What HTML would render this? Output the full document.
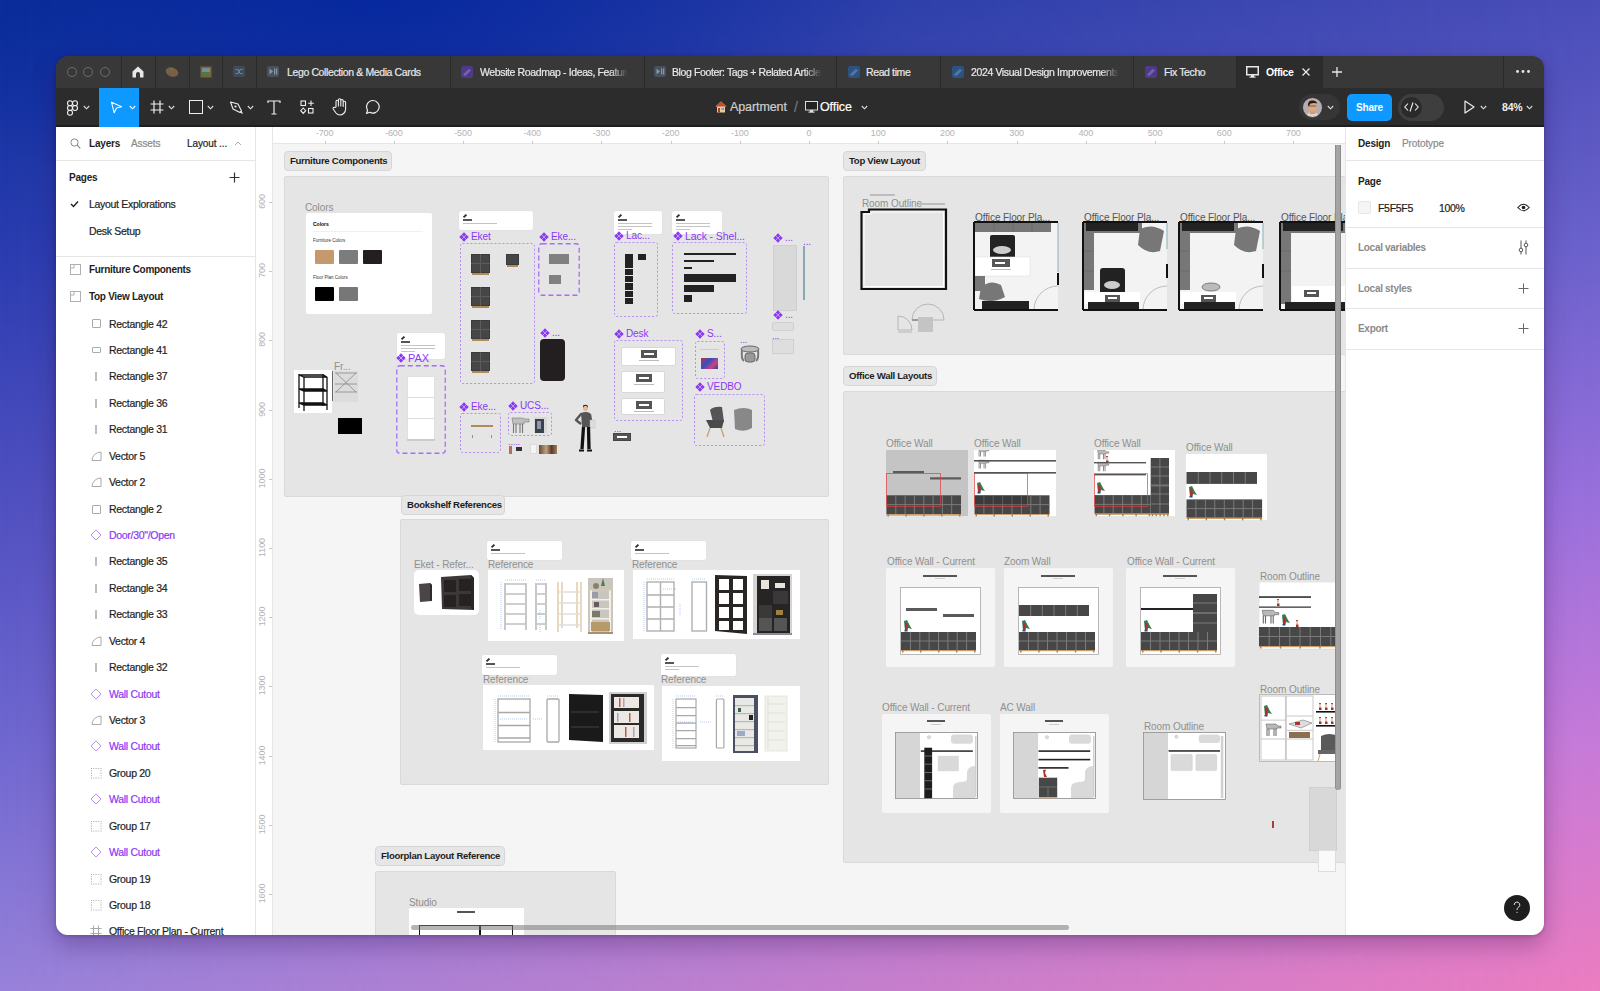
<!DOCTYPE html>
<html><head><meta charset="utf-8">
<style>
*{box-sizing:border-box;margin:0;padding:0}
html,body{width:1600px;height:991px;overflow:hidden;font-family:"Liberation Sans",sans-serif}
body{position:relative;background:#5a50b8}
.a{position:absolute}
#bg1{left:0;top:0;width:1600px;height:991px;background:linear-gradient(to bottom,#0a2e98 0px,#2a3cb0 250px,#5050c0 500px,#7068d0 750px,#9882da 991px)}
#bg2{left:0;top:0;width:1600px;height:991px;background:linear-gradient(to bottom,#4a4eb8 0px,#6c62cc 250px,#9a70dc 500px,#c87ad8 750px,#ec7cc0 991px);-webkit-mask-image:linear-gradient(to right,transparent,#000)}
#shadow{left:56px;top:56px;width:1488px;height:879px;border-radius:12px;box-shadow:0 10px 24px rgba(40,0,60,0.28),0 1px 4px rgba(0,0,0,0.2)}
#win{left:0;top:0;width:1600px;height:991px;clip-path:inset(56px 56px 56px 56px round 12px)}
.t{white-space:nowrap;font-size:10.5px;letter-spacing:-0.3px;line-height:12px;-webkit-text-stroke:0.2px currentColor}
.t[style*="bold"]{-webkit-text-stroke:0}
#tabs{left:56px;top:56px;width:1488px;height:32px;background:#383838}
.sep{width:1px;background:#2a2a2a;top:56px;height:32px}
.tabt{color:#e8e8e8;top:66px;font-size:10.5px;letter-spacing:-0.38px}
#tool{left:56px;top:88px;width:1488px;height:39px;background:#2c2c2c;border-bottom:2px solid #1e1e1e}
#lp{left:56px;top:127px;width:200px;height:808px;background:#fff;border-right:1px solid #e6e6e6}
#rp{left:1345px;top:127px;width:199px;height:808px;background:#fff;border-left:1px solid #e6e6e6}
#cv{left:256px;top:127px;width:1089px;height:808px;background:#f5f5f5;overflow:hidden}
.hr{height:1px;background:#e6e6e6}
.lt{color:#1e1e1e}
.lay{left:109px;color:#1e1e1e}
.pur{color:#8a38f5}
.frame{background:#e5e5e5;border:1px solid #d6d6d6}
.tag{background:#e6e6e6;border:1px solid #d4d4d4;border-radius:3px;font-weight:bold;font-size:10px;letter-spacing:-0.2px;color:#1e1e1e;padding:4px 4px 0 4px;height:20px}
.lbl{color:#8c8c8c;font-size:10px;letter-spacing:-0.2px;white-space:nowrap}
</style></head><body>
<div id="bg1" class="a"></div>
<div id="bg2" class="a"></div>
<div class="a" style="left:0;top:0;width:1600px;height:991px;background:radial-gradient(ellipse 520px 220px at 380px 0px,rgba(0,36,158,0.75),rgba(0,36,158,0) 100%)"></div>
<div id="shadow" class="a"></div>
<div id="win" class="a">
  <!-- TAB BAR -->
  <div id="tabs" class="a"></div>
  <div class="a" style="left:67px;top:67px;width:10px;height:10px;border:1px solid #6e6e6e;border-radius:50%"></div>
  <div class="a" style="left:83px;top:67px;width:10px;height:10px;border:1px solid #6e6e6e;border-radius:50%"></div>
  <div class="a" style="left:100px;top:67px;width:10px;height:10px;border:1px solid #6e6e6e;border-radius:50%"></div>
  <div class="a sep" style="left:121px"></div><div class="a sep" style="left:155px"></div><div class="a sep" style="left:189px"></div><div class="a sep" style="left:222px"></div><div class="a sep" style="left:256px"></div>
  <div class="a sep" style="left:450px"></div><div class="a sep" style="left:644px"></div><div class="a sep" style="left:836px"></div><div class="a sep" style="left:940px"></div><div class="a sep" style="left:1133px"></div><div class="a sep" style="left:1236px"></div><div class="a sep" style="left:1322px"></div><div class="a sep" style="left:1503px"></div>
  <svg class="a" style="left:132px;top:66px" width="12" height="12" viewBox="0 0 12 12"><path d="M6 0.5 L11.5 5.5 V11.5 H8 V8 A2 2 0 0 0 4 8 V11.5 H0.5 V5.5 Z" fill="#e8e8e8"/></svg>
  <svg class="a" style="left:165px;top:66px" width="14" height="12" viewBox="0 0 14 12"><ellipse cx="7" cy="6" rx="6.5" ry="4.5" transform="rotate(20 7 6)" fill="#7a6040"/><circle cx="4" cy="4" r="1.1" fill="#4a6a90"/><circle cx="7" cy="3" r="1.1" fill="#5a8050"/><circle cx="10" cy="5" r="1.1" fill="#905050"/><circle cx="5" cy="8" r="1.1" fill="#705090"/></svg>
  <svg class="a" style="left:200px;top:66px" width="12" height="12" viewBox="0 0 12 12"><rect x="0.5" y="0.5" width="11" height="11" fill="#7a6430"/><rect x="2" y="2" width="8" height="8" fill="#4a7a48"/><rect x="2" y="2" width="8" height="4" fill="#7a8a9a"/></svg>
  <svg class="a" style="left:233px;top:66px" width="12" height="11" viewBox="0 0 12 11"><rect width="12" height="11" rx="2" fill="#3e4c5a"/><path d="M2.5 3.5 H5 L7 7.5 H9.5 M2.5 7.5 H5 L7 3.5 H9.5" stroke="#7a8a9a" stroke-width="0.9" fill="none"/></svg>
  <svg class="a" style="left:267px;top:66px" width="12" height="11" viewBox="0 0 12 11"><rect width="12" height="11" rx="2" fill="#46525e"/><path d="M2.5 2.5 L6 5.5 L2.5 8.5Z" fill="#8a96a2"/><rect x="7" y="2.5" width="1.2" height="6" fill="#8a96a2"/><rect x="9" y="2.5" width="1.2" height="6" fill="#8a96a2"/></svg>
  <div class="a t tabt" style="left:287px">Lego Collection &amp; Media Cards</div>
  <svg class="a" style="left:461px;top:66px" width="12" height="12" viewBox="0 0 12 12"><rect width="12" height="12" rx="2" fill="#4e3a86"/><path d="M3 8.5 L8 3.5 L9 4.5 L4 9.5 Z" fill="none" stroke="#a090d0" stroke-width="0.9"/></svg>
  <div class="a t tabt" style="left:480px;width:148px;overflow:hidden;-webkit-mask-image:linear-gradient(to right,#000 88%,transparent)">Website Roadmap - Ideas, Features</div>
  <svg class="a" style="left:654px;top:66px" width="12" height="11" viewBox="0 0 12 11"><rect width="12" height="11" rx="2" fill="#46525e"/><path d="M2.5 2.5 L6 5.5 L2.5 8.5Z" fill="#8a96a2"/><rect x="7" y="2.5" width="1.2" height="6" fill="#8a96a2"/><rect x="9" y="2.5" width="1.2" height="6" fill="#8a96a2"/></svg>
  <div class="a t tabt" style="left:672px;width:150px;overflow:hidden;-webkit-mask-image:linear-gradient(to right,#000 88%,transparent)">Blog Footer: Tags + Related Articles</div>
  <svg class="a" style="left:848px;top:66px" width="12" height="12" viewBox="0 0 12 12"><rect width="12" height="12" rx="2" fill="#2e5282"/><path d="M3 8.5 L8 3.5 L9 4.5 L4 9.5 Z" fill="none" stroke="#7aa0c8" stroke-width="0.9"/></svg>
  <div class="a t tabt" style="left:866px">Read time</div>
  <svg class="a" style="left:952px;top:66px" width="12" height="12" viewBox="0 0 12 12"><rect width="12" height="12" rx="2" fill="#2e5282"/><path d="M3 8.5 L8 3.5 L9 4.5 L4 9.5 Z" fill="none" stroke="#7aa0c8" stroke-width="0.9"/></svg>
  <div class="a t tabt" style="left:971px;width:148px;overflow:hidden;-webkit-mask-image:linear-gradient(to right,#000 88%,transparent)">2024 Visual Design Improvements</div>
  <svg class="a" style="left:1145px;top:66px" width="12" height="12" viewBox="0 0 12 12"><rect width="12" height="12" rx="2" fill="#4e3a86"/><path d="M3 8.5 L8 3.5 L9 4.5 L4 9.5 Z" fill="none" stroke="#a090d0" stroke-width="0.9"/></svg>
  <div class="a t tabt" style="left:1164px">Fix Techo</div>
  <div class="a" style="left:1237px;top:56px;width:85px;height:32px;background:#2c2c2c"></div>
  <svg class="a" style="left:1246px;top:66px" width="13" height="12" viewBox="0 0 13 12"><rect x="0.75" y="0.75" width="11.5" height="8" fill="none" stroke="#e8e8e8" stroke-width="1.5"/><rect x="5" y="9" width="3" height="2" fill="#e8e8e8"/><rect x="3.5" y="10.5" width="6" height="1.2" fill="#e8e8e8"/></svg>
  <div class="a t tabt" style="left:1266px;color:#fff;font-weight:bold">Office</div>
  <svg class="a" style="left:1301px;top:67px" width="10" height="10" viewBox="0 0 10 10"><path d="M1.5 1.5 L8.5 8.5 M8.5 1.5 L1.5 8.5" stroke="#e8e8e8" stroke-width="1.3"/></svg>
  <svg class="a" style="left:1331px;top:66px" width="12" height="12" viewBox="0 0 12 12"><path d="M6 1 V11 M1 6 H11" stroke="#e8e8e8" stroke-width="1.3"/></svg>
  <svg class="a" style="left:1515px;top:69px" width="16" height="5" viewBox="0 0 16 5"><circle cx="2.5" cy="2.5" r="1.4" fill="#e8e8e8"/><circle cx="8" cy="2.5" r="1.4" fill="#e8e8e8"/><circle cx="13.5" cy="2.5" r="1.4" fill="#e8e8e8"/></svg>

  <!-- TOOLBAR -->
  <div id="tool" class="a"></div>
  <svg class="a" style="left:66px;top:100px" width="13" height="16" viewBox="0 0 13 16"><g fill="none" stroke="#eee" stroke-width="1.1"><circle cx="4" cy="3.2" r="2.5"/><circle cx="9" cy="3.2" r="2.5"/><circle cx="4" cy="8" r="2.5"/><circle cx="9" cy="8" r="2.5"/><circle cx="4" cy="12.8" r="2.5"/></g></svg>
  <svg class="a" style="left:83px;top:105px" width="7" height="5" viewBox="0 0 7 5"><path d="M0.8 1 L3.5 3.8 L6.2 1" fill="none" stroke="#e0e0e0" stroke-width="1.1"/></svg>
  <div class="a" style="left:99px;top:88px;width:40px;height:39px;background:#0d99ff"></div>
  <svg class="a" style="left:110px;top:101px" width="13" height="13" viewBox="0 0 13 13"><path d="M1.5 1.2 L11.5 5.8 L6.5 7 L4.2 11.8 Z" fill="none" stroke="#fff" stroke-width="1.1" stroke-linejoin="round"/></svg>
  <svg class="a" style="left:129px;top:105px" width="7" height="5" viewBox="0 0 7 5"><path d="M0.8 1 L3.5 3.8 L6.2 1" fill="none" stroke="#fff" stroke-width="1.1"/></svg>
  <svg class="a" style="left:150px;top:100px" width="14" height="14" viewBox="0 0 14 14"><path d="M4 0.5 V13.5 M10 0.5 V13.5 M0.5 4 H13.5 M0.5 10 H13.5" stroke="#eee" stroke-width="1.2"/></svg>
  <svg class="a" style="left:168px;top:105px" width="7" height="5" viewBox="0 0 7 5"><path d="M0.8 1 L3.5 3.8 L6.2 1" fill="none" stroke="#e0e0e0" stroke-width="1.1"/></svg>
  <div class="a" style="left:189px;top:100px;width:14px;height:14px;border:1.2px solid #eee"></div>
  <svg class="a" style="left:207px;top:105px" width="7" height="5" viewBox="0 0 7 5"><path d="M0.8 1 L3.5 3.8 L6.2 1" fill="none" stroke="#e0e0e0" stroke-width="1.1"/></svg>
  <svg class="a" style="left:229px;top:100px" width="15" height="15" viewBox="0 0 15 15"><path d="M1.5 2 L9 4 L12.5 11 L11 12.5 L4 9 Z" fill="none" stroke="#eee" stroke-width="1.1" stroke-linejoin="round"/><circle cx="6.5" cy="6.5" r="1.1" fill="#eee"/><path d="M11.5 11.5 L13.5 13.5" stroke="#eee" stroke-width="1.1"/></svg>
  <svg class="a" style="left:247px;top:105px" width="7" height="5" viewBox="0 0 7 5"><path d="M0.8 1 L3.5 3.8 L6.2 1" fill="none" stroke="#e0e0e0" stroke-width="1.1"/></svg>
  <svg class="a" style="left:267px;top:100px" width="14" height="15" viewBox="0 0 14 15"><path d="M1 3 V1 H13 V3 M7 1 V14 M4.5 14 H9.5" fill="none" stroke="#eee" stroke-width="1.2"/></svg>
  <svg class="a" style="left:300px;top:100px" width="15" height="15" viewBox="0 0 15 15"><g fill="none" stroke="#eee" stroke-width="1.1"><rect x="1" y="1" width="4.5" height="4.5"/><path d="M11 0.5 V6 M8.2 3.2 H13.8"/><rect x="8.5" y="8.5" width="4.5" height="4.5"/><path d="M3.2 8 L5.7 10.7 L3.2 13.4 L0.7 10.7 Z"/></g></svg>
  <svg class="a" style="left:332px;top:98px" width="16" height="18" viewBox="0 0 16 18"><path d="M4 9 V3.5 a1.2 1.2 0 0 1 2.4 0 V8 V2 a1.2 1.2 0 0 1 2.4 0 V8 V2.8 a1.2 1.2 0 0 1 2.4 0 V8.5 V4.5 a1.2 1.2 0 0 1 2.4 0 V11 a6 6 0 0 1 -6 6 H8 a5 5 0 0 1 -4 -2 L1.2 11 a1.2 1.2 0 0 1 1.8 -1.5 Z" fill="none" stroke="#eee" stroke-width="1.1" stroke-linejoin="round"/></svg>
  <svg class="a" style="left:365px;top:99px" width="16" height="16" viewBox="0 0 16 16"><path d="M8 1.5 a6.3 6.3 0 1 1 -3.2 11.8 L1.5 14.5 L2.6 11.2 A6.3 6.3 0 0 1 8 1.5 Z" fill="none" stroke="#eee" stroke-width="1.2" stroke-linejoin="round"/></svg>
  <svg class="a" style="left:715px;top:101px" width="12" height="12" viewBox="0 0 12 12"><path d="M6 0.5 L11.5 5.5 H10 V11.5 H2 V5.5 H0.5 Z" fill="#e8c9a0"/><path d="M6 0.5 L11.5 5.5 H0.5 Z" fill="#c0502a"/><rect x="3" y="7" width="2" height="4.5" fill="#a04020"/><rect x="6.5" y="7" width="2.5" height="2" fill="#5aa0d0"/></svg>
  <div class="a t" style="left:730px;top:100px;color:#cfcfcf;font-size:12.5px;line-height:14px;letter-spacing:-0.1px">Apartment</div>
  <div class="a t" style="left:794px;top:99px;color:#777;font-size:14px;line-height:16px">/</div>
  <svg class="a" style="left:805px;top:101px" width="13" height="12" viewBox="0 0 13 12"><rect x="0.5" y="0.5" width="12" height="8.5" fill="#222" stroke="#ddd" stroke-width="1"/><rect x="5" y="9" width="3" height="2" fill="#ddd"/><rect x="3.5" y="10.5" width="6" height="1.2" fill="#ddd"/></svg>
  <div class="a t" style="left:820px;top:100px;color:#fff;font-size:12.5px;line-height:14px;letter-spacing:-0.1px">Office</div>
  <svg class="a" style="left:861px;top:105px" width="7" height="5" viewBox="0 0 7 5"><path d="M0.8 1 L3.5 3.8 L6.2 1" fill="none" stroke="#e0e0e0" stroke-width="1.1"/></svg>
  <div class="a" style="left:1299px;top:94px;width:41px;height:26px;background:#363636;border-radius:13px"></div>
  <svg class="a" style="left:1302px;top:97px" width="21" height="21" viewBox="0 0 21 21"><defs><clipPath id="av"><circle cx="10.5" cy="10.5" r="10"/></clipPath></defs><g clip-path="url(#av)"><rect width="21" height="21" fill="#b5adb0"/><path d="M3 21 Q5 15 10 15 Q16 15 18 21 Z" fill="#d8d4d4"/><rect x="8" y="12" width="5" height="5" fill="#d49a70"/><ellipse cx="10.5" cy="9.5" rx="4.3" ry="5.2" fill="#e0a880"/><path d="M6 8 Q6 3.5 10.5 3.6 Q14.5 3.6 15 6.5 Q12 5.5 8 6.8 L7 10 Z" fill="#2a1a14"/><path d="M7.2 9 H14.2" stroke="#555" stroke-width="0.9"/></g><circle cx="10.5" cy="10.5" r="10" fill="none" stroke="#2a2a2a" stroke-width="0.8"/></svg>
  <svg class="a" style="left:1327px;top:105px" width="7" height="5" viewBox="0 0 7 5"><path d="M0.8 1 L3.5 3.8 L6.2 1" fill="none" stroke="#e0e0e0" stroke-width="1.1"/></svg>
  <div class="a" style="left:1347px;top:94px;width:45px;height:27px;background:#0d99ff;border-radius:5px;color:#fff;font-weight:bold;font-size:10px;line-height:27px;text-align:center;letter-spacing:-0.2px">Share</div>
  <div class="a" style="left:1398px;top:94px;width:46px;height:27px;background:#3e3e3e;border-radius:14px"></div>
  <div class="a" style="left:1401px;top:97px;width:21px;height:21px;background:#2a2a2a;border-radius:50%"></div>
  <svg class="a" style="left:1404px;top:102px" width="15" height="10" viewBox="0 0 15 10"><path d="M4 1.5 L0.8 5 L4 8.5 M11 1.5 L14.2 5 L11 8.5 M9 0.5 L6 9.5" fill="none" stroke="#eee" stroke-width="1.1"/></svg>
  <svg class="a" style="left:1464px;top:100px" width="11" height="14" viewBox="0 0 11 14"><path d="M1 1 L10 7 L1 13 Z" fill="none" stroke="#eee" stroke-width="1.2" stroke-linejoin="round"/></svg>
  <svg class="a" style="left:1480px;top:105px" width="7" height="5" viewBox="0 0 7 5"><path d="M0.8 1 L3.5 3.8 L6.2 1" fill="none" stroke="#e0e0e0" stroke-width="1.1"/></svg>
  <div class="a t" style="left:1502px;top:101px;color:#eee;font-size:10.5px;font-weight:bold;letter-spacing:-0.2px">84%</div>
  <svg class="a" style="left:1526px;top:105px" width="7" height="5" viewBox="0 0 7 5"><path d="M0.8 1 L3.5 3.8 L6.2 1" fill="none" stroke="#e0e0e0" stroke-width="1.1"/></svg>

  <!-- LEFT PANEL -->
  <div id="lp" class="a"></div>
  <svg class="a" style="left:70px;top:138px" width="11" height="11" viewBox="0 0 11 11"><circle cx="4.5" cy="4.5" r="3.6" fill="none" stroke="#8a8a8a" stroke-width="1"/><path d="M7.2 7.2 L10.3 10.3" stroke="#8a8a8a" stroke-width="1.1"/></svg>
  <div class="a t" style="left:89px;top:138px;color:#1e1e1e;font-weight:bold;font-size:10px;letter-spacing:-0.2px">Layers</div>
  <div class="a t" style="left:131px;top:138px;color:#8a8a8a;font-size:10px;letter-spacing:-0.1px">Assets</div>
  <div class="a t" style="left:187px;top:138px;color:#1e1e1e;font-size:10px;letter-spacing:-0.1px">Layout ...</div>
  <svg class="a" style="left:234px;top:141px" width="8" height="5" viewBox="0 0 8 5"><path d="M1 4 L4 1 L7 4" fill="none" stroke="#aaaaaa" stroke-width="1"/></svg>
  <div class="a hr" style="left:56px;top:160px;width:199px"></div>
  <div class="a t" style="left:69px;top:172px;color:#1e1e1e;font-weight:bold;font-size:10px;letter-spacing:-0.2px">Pages</div>
  <svg class="a" style="left:229px;top:172px" width="11" height="11" viewBox="0 0 11 11"><path d="M5.5 0.5 V10.5 M0.5 5.5 H10.5" stroke="#333" stroke-width="1.2"/></svg>
  <svg class="a" style="left:70px;top:200px" width="9" height="8" viewBox="0 0 9 8"><path d="M1 4 L3.5 6.5 L8 1.5" fill="none" stroke="#1e1e1e" stroke-width="1.4"/></svg>
  <div class="a t" style="left:89px;top:198px;color:#1e1e1e">Layout Explorations</div>
  <div class="a t" style="left:89px;top:225px;color:#1e1e1e">Desk Setup</div>
  <div class="a hr" style="left:56px;top:256px;width:199px"></div>
  <svg class="a" style="left:70px;top:264px" width="11" height="11" viewBox="0 0 11 11"><rect x="0.5" y="0.5" width="10" height="10" fill="none" stroke="#b0b0b0"/><path d="M0.5 4 H4 V0.5" fill="none" stroke="#b0b0b0"/></svg>
  <div class="a t" style="left:89px;top:264px;color:#1e1e1e;font-weight:bold;font-size:10px;letter-spacing:-0.3px">Furniture Components</div>
  <svg class="a" style="left:70px;top:291px" width="11" height="11" viewBox="0 0 11 11"><rect x="0.5" y="0.5" width="10" height="10" fill="none" stroke="#b0b0b0"/><path d="M0.5 4 H4 V0.5" fill="none" stroke="#b0b0b0"/></svg>
  <div class="a t" style="left:89px;top:291px;color:#1e1e1e;font-weight:bold;font-size:10px;letter-spacing:-0.3px">Top View Layout</div>
<div class="a" style="left:92px;top:319px;width:9px;height:9px;border:1px solid #aaaaaa;border-radius:1px"></div><div class="a t" style="left:109px;top:318px;color:#1e1e1e">Rectangle 42</div>
<div class="a" style="left:92px;top:347px;width:9px;height:6px;border:1px solid #aaaaaa;border-radius:1px"></div><div class="a t" style="left:109px;top:344px;color:#1e1e1e">Rectangle 41</div>
<div class="a" style="left:95px;top:372px;width:2px;height:9px;background:#bdbdbd"></div><div class="a t" style="left:109px;top:370px;color:#1e1e1e">Rectangle 37</div>
<div class="a" style="left:95px;top:399px;width:2px;height:9px;background:#bdbdbd"></div><div class="a t" style="left:109px;top:397px;color:#1e1e1e">Rectangle 36</div>
<div class="a" style="left:95px;top:425px;width:2px;height:9px;background:#bdbdbd"></div><div class="a t" style="left:109px;top:423px;color:#1e1e1e">Rectangle 31</div>
<svg class="a" style="left:91px;top:451px" width="11" height="10" viewBox="0 0 11 10"><path d="M1 9.5 H10 V1 A9 8.5 0 0 0 1 9.5 Z" fill="none" stroke="#aaaaaa" stroke-width="1"/></svg><div class="a t" style="left:109px;top:450px;color:#1e1e1e">Vector 5</div>
<svg class="a" style="left:91px;top:477px" width="11" height="10" viewBox="0 0 11 10"><path d="M1 9.5 H10 V1 A9 8.5 0 0 0 1 9.5 Z" fill="none" stroke="#aaaaaa" stroke-width="1"/></svg><div class="a t" style="left:109px;top:476px;color:#1e1e1e">Vector 2</div>
<div class="a" style="left:92px;top:505px;width:9px;height:9px;border:1px solid #aaaaaa;border-radius:1px"></div><div class="a t" style="left:109px;top:503px;color:#1e1e1e">Rectangle 2</div>
<svg class="a" style="left:90px;top:529px" width="12" height="12" viewBox="0 0 12 12"><path d="M6 1 L11 6 L6 11 L1 6 Z" fill="none" stroke="#b890f5" stroke-width="1"/></svg><div class="a t" style="left:109px;top:529px;color:#8a38f5">Door/30"/Open</div>
<div class="a" style="left:95px;top:557px;width:2px;height:9px;background:#bdbdbd"></div><div class="a t" style="left:109px;top:555px;color:#1e1e1e">Rectangle 35</div>
<div class="a" style="left:95px;top:584px;width:2px;height:9px;background:#bdbdbd"></div><div class="a t" style="left:109px;top:582px;color:#1e1e1e">Rectangle 34</div>
<div class="a" style="left:95px;top:610px;width:2px;height:9px;background:#bdbdbd"></div><div class="a t" style="left:109px;top:608px;color:#1e1e1e">Rectangle 33</div>
<svg class="a" style="left:91px;top:636px" width="11" height="10" viewBox="0 0 11 10"><path d="M1 9.5 H10 V1 A9 8.5 0 0 0 1 9.5 Z" fill="none" stroke="#aaaaaa" stroke-width="1"/></svg><div class="a t" style="left:109px;top:635px;color:#1e1e1e">Vector 4</div>
<div class="a" style="left:95px;top:663px;width:2px;height:9px;background:#bdbdbd"></div><div class="a t" style="left:109px;top:661px;color:#1e1e1e">Rectangle 32</div>
<svg class="a" style="left:90px;top:688px" width="12" height="12" viewBox="0 0 12 12"><path d="M6 1 L11 6 L6 11 L1 6 Z" fill="none" stroke="#b890f5" stroke-width="1"/></svg><div class="a t" style="left:109px;top:688px;color:#8a38f5">Wall Cutout</div>
<svg class="a" style="left:91px;top:715px" width="11" height="10" viewBox="0 0 11 10"><path d="M1 9.5 H10 V1 A9 8.5 0 0 0 1 9.5 Z" fill="none" stroke="#aaaaaa" stroke-width="1"/></svg><div class="a t" style="left:109px;top:714px;color:#1e1e1e">Vector 3</div>
<svg class="a" style="left:90px;top:740px" width="12" height="12" viewBox="0 0 12 12"><path d="M6 1 L11 6 L6 11 L1 6 Z" fill="none" stroke="#b890f5" stroke-width="1"/></svg><div class="a t" style="left:109px;top:740px;color:#8a38f5">Wall Cutout</div>
<svg class="a" style="left:91px;top:768px" width="11" height="11" viewBox="0 0 11 11"><g fill="#a8a8a8"><rect x="0" y="0" width="1" height="1"/><rect x="4.5" y="0" width="1.2" height="1"/><rect x="9.5" y="0" width="1" height="1"/><rect x="0" y="4.5" width="1" height="1.2"/><rect x="9.5" y="4.5" width="1" height="1.2"/><rect x="0" y="9.5" width="1" height="1"/><rect x="4.5" y="9.5" width="1.2" height="1"/><rect x="9.5" y="9.5" width="1" height="1"/><rect x="2.2" y="0" width="1" height="1"/><rect x="7.2" y="0" width="1" height="1"/><rect x="2.2" y="9.5" width="1" height="1"/><rect x="7.2" y="9.5" width="1" height="1"/><rect x="0" y="2.2" width="1" height="1"/><rect x="0" y="7.2" width="1" height="1"/><rect x="9.5" y="2.2" width="1" height="1"/><rect x="9.5" y="7.2" width="1" height="1"/></g></svg><div class="a t" style="left:109px;top:767px;color:#1e1e1e">Group 20</div>
<svg class="a" style="left:90px;top:793px" width="12" height="12" viewBox="0 0 12 12"><path d="M6 1 L11 6 L6 11 L1 6 Z" fill="none" stroke="#b890f5" stroke-width="1"/></svg><div class="a t" style="left:109px;top:793px;color:#8a38f5">Wall Cutout</div>
<svg class="a" style="left:91px;top:821px" width="11" height="11" viewBox="0 0 11 11"><g fill="#a8a8a8"><rect x="0" y="0" width="1" height="1"/><rect x="4.5" y="0" width="1.2" height="1"/><rect x="9.5" y="0" width="1" height="1"/><rect x="0" y="4.5" width="1" height="1.2"/><rect x="9.5" y="4.5" width="1" height="1.2"/><rect x="0" y="9.5" width="1" height="1"/><rect x="4.5" y="9.5" width="1.2" height="1"/><rect x="9.5" y="9.5" width="1" height="1"/><rect x="2.2" y="0" width="1" height="1"/><rect x="7.2" y="0" width="1" height="1"/><rect x="2.2" y="9.5" width="1" height="1"/><rect x="7.2" y="9.5" width="1" height="1"/><rect x="0" y="2.2" width="1" height="1"/><rect x="0" y="7.2" width="1" height="1"/><rect x="9.5" y="2.2" width="1" height="1"/><rect x="9.5" y="7.2" width="1" height="1"/></g></svg><div class="a t" style="left:109px;top:820px;color:#1e1e1e">Group 17</div>
<svg class="a" style="left:90px;top:846px" width="12" height="12" viewBox="0 0 12 12"><path d="M6 1 L11 6 L6 11 L1 6 Z" fill="none" stroke="#b890f5" stroke-width="1"/></svg><div class="a t" style="left:109px;top:846px;color:#8a38f5">Wall Cutout</div>
<svg class="a" style="left:91px;top:874px" width="11" height="11" viewBox="0 0 11 11"><g fill="#a8a8a8"><rect x="0" y="0" width="1" height="1"/><rect x="4.5" y="0" width="1.2" height="1"/><rect x="9.5" y="0" width="1" height="1"/><rect x="0" y="4.5" width="1" height="1.2"/><rect x="9.5" y="4.5" width="1" height="1.2"/><rect x="0" y="9.5" width="1" height="1"/><rect x="4.5" y="9.5" width="1.2" height="1"/><rect x="9.5" y="9.5" width="1" height="1"/><rect x="2.2" y="0" width="1" height="1"/><rect x="7.2" y="0" width="1" height="1"/><rect x="2.2" y="9.5" width="1" height="1"/><rect x="7.2" y="9.5" width="1" height="1"/><rect x="0" y="2.2" width="1" height="1"/><rect x="0" y="7.2" width="1" height="1"/><rect x="9.5" y="2.2" width="1" height="1"/><rect x="9.5" y="7.2" width="1" height="1"/></g></svg><div class="a t" style="left:109px;top:873px;color:#1e1e1e">Group 19</div>
<svg class="a" style="left:91px;top:900px" width="11" height="11" viewBox="0 0 11 11"><g fill="#a8a8a8"><rect x="0" y="0" width="1" height="1"/><rect x="4.5" y="0" width="1.2" height="1"/><rect x="9.5" y="0" width="1" height="1"/><rect x="0" y="4.5" width="1" height="1.2"/><rect x="9.5" y="4.5" width="1" height="1.2"/><rect x="0" y="9.5" width="1" height="1"/><rect x="4.5" y="9.5" width="1.2" height="1"/><rect x="9.5" y="9.5" width="1" height="1"/><rect x="2.2" y="0" width="1" height="1"/><rect x="7.2" y="0" width="1" height="1"/><rect x="2.2" y="9.5" width="1" height="1"/><rect x="7.2" y="9.5" width="1" height="1"/><rect x="0" y="2.2" width="1" height="1"/><rect x="0" y="7.2" width="1" height="1"/><rect x="9.5" y="2.2" width="1" height="1"/><rect x="9.5" y="7.2" width="1" height="1"/></g></svg><div class="a t" style="left:109px;top:899px;color:#1e1e1e">Group 18</div>
<svg class="a" style="left:90px;top:925px" width="12" height="12" viewBox="0 0 12 12"><path d="M3.5 0.5 V11.5 M8.5 0.5 V11.5 M0.5 3.5 H11.5 M0.5 8.5 H11.5" stroke="#a8a8a8" stroke-width="1"/></svg><div class="a t" style="left:109px;top:925px;color:#1e1e1e">Office Floor Plan - Current</div>

  <!-- CANVAS -->
  <div id="cv" class="a"></div>
<!--CANVAS-->
<!--CONTENT-->
<div class="a" style="left:284px;top:151px;width:108px;height:20px;background:#e6e6e6;border:1px solid #d6d6d6;border-radius:4px;font-weight:bold;font-size:9.6px;line-height:18px;letter-spacing:-0.3px;color:#1e1e1e;padding-left:5px;white-space:nowrap">Furniture Components</div>
<div class="a" style="left:284px;top:176px;width:545px;height:321px;background:#e5e5e5;border:1px solid #d9d9d9;border-radius:2px"></div>
<div class="a" style="left:305px;top:202px;font-size:10px;line-height:12px;color:#8f8f8f;letter-spacing:-0.1px;white-space:nowrap">Colors</div>
<div class="a" style="left:306px;top:213px;width:126px;height:101px;background:#fff;border-radius:2px">
<div class="a" style="left:7px;top:8px;font-size:5px;font-weight:bold;color:#000">Colors</div>
<div class="a" style="left:7px;top:18px;width:110px;height:1px;background:#f0f0f0"></div>
<div class="a" style="left:7px;top:25px;font-size:4.5px;color:#333;white-space:nowrap">Furniture Colors</div>
<div class="a" style="left:9px;top:37px;width:19px;height:14px;background:#c49a6c;border-radius:1px"></div>
<div class="a" style="left:33px;top:37px;width:19px;height:14px;background:#7b7c7e;border-radius:1px"></div>
<div class="a" style="left:57px;top:37px;width:19px;height:14px;background:#231f20;border-radius:1px"></div>
<div class="a" style="left:7px;top:62px;font-size:4.5px;color:#333;white-space:nowrap">Floor Plan Colors</div>
<div class="a" style="left:9px;top:74px;width:19px;height:14px;background:#000;border-radius:1px"></div>
<div class="a" style="left:33px;top:74px;width:19px;height:14px;background:#777;border-radius:1px"></div>
</div>
<div class="a" style="left:459px;top:211px;width:74px;height:19px;background:#fff;border-radius:2px;box-shadow:0 0 1px rgba(0,0,0,0.12)"><div class="a" style="left:4px;top:4px;width:4px;height:2px;background:#333;transform:rotate(-45deg)"></div><div class="a" style="left:4px;top:8px;width:9px;height:2px;background:#555"></div><div class="a" style="left:4px;top:12px;width:34px;height:1px;background:#c4c4c4"></div></div>
<svg class="a" style="left:459px;top:232px" width="10" height="10" viewBox="0 0 10 10"><g fill="#8a38f5"><path d="M5 0.3 L7.2 2.5 L5 4.7 L2.8 2.5Z"/><path d="M5 5.3 L7.2 7.5 L5 9.7 L2.8 7.5Z"/><path d="M2.5 2.8 L4.7 5 L2.5 7.2 L0.3 5Z"/><path d="M7.5 2.8 L9.7 5 L7.5 7.2 L5.3 5Z"/></g></svg>
<div class="a" style="left:471px;top:231px;font-size:10px;line-height:12px;color:#8a38f5;letter-spacing:-0.1px;white-space:nowrap">Eket</div>
<svg class="a" style="left:460px;top:243px" width="75" height="141"><rect x="0.5" y="0.5" width="74" height="140" rx="2" fill="none" stroke="#b58cf5" stroke-width="1" stroke-dasharray="2 2"/></svg>
<div class="a" style="left:471px;top:254px;width:19px;height:19px;background:#464646;border:1px solid #3a3a3a"></div><div class="a" style="left:480px;top:254px;width:1px;height:19px;background:#5c5c5c"></div><div class="a" style="left:471px;top:263px;width:19px;height:1px;background:#5c5c5c"></div><div class="a" style="left:472px;top:273px;width:17px;height:2px;background:#b08a58"></div>
<div class="a" style="left:506px;top:254px;width:13px;height:11px;background:#464646;border:1px solid #3a3a3a"></div><div class="a" style="left:507px;top:265px;width:11px;height:2px;background:#b08a58"></div>
<div class="a" style="left:471px;top:287px;width:19px;height:19px;background:#464646;border:1px solid #3a3a3a"></div><div class="a" style="left:480px;top:287px;width:1px;height:19px;background:#5c5c5c"></div><div class="a" style="left:471px;top:296px;width:19px;height:1px;background:#5c5c5c"></div><div class="a" style="left:472px;top:306px;width:17px;height:2px;background:#b08a58"></div>
<div class="a" style="left:471px;top:320px;width:19px;height:19px;background:#464646;border:1px solid #3a3a3a"></div><div class="a" style="left:480px;top:320px;width:1px;height:19px;background:#5c5c5c"></div><div class="a" style="left:471px;top:329px;width:19px;height:1px;background:#5c5c5c"></div><div class="a" style="left:472px;top:339px;width:17px;height:2px;background:#b08a58"></div>
<div class="a" style="left:471px;top:352px;width:19px;height:19px;background:#464646;border:1px solid #3a3a3a"></div><div class="a" style="left:480px;top:352px;width:1px;height:19px;background:#5c5c5c"></div><div class="a" style="left:471px;top:361px;width:19px;height:1px;background:#5c5c5c"></div><div class="a" style="left:472px;top:371px;width:17px;height:2px;background:#b08a58"></div>
<svg class="a" style="left:539px;top:232px" width="10" height="10" viewBox="0 0 10 10"><g fill="#8a38f5"><path d="M5 0.3 L7.2 2.5 L5 4.7 L2.8 2.5Z"/><path d="M5 5.3 L7.2 7.5 L5 9.7 L2.8 7.5Z"/><path d="M2.5 2.8 L4.7 5 L2.5 7.2 L0.3 5Z"/><path d="M7.5 2.8 L9.7 5 L7.5 7.2 L5.3 5Z"/></g></svg>
<div class="a" style="left:551px;top:231px;font-size:10px;line-height:12px;color:#8a38f5;letter-spacing:-0.1px;white-space:nowrap">Eke...</div>
<svg class="a" style="left:538px;top:243px" width="42" height="53"><rect x="0.75" y="0.75" width="40.5" height="51.5" rx="3" fill="none" stroke="#a66ef6" stroke-width="1.3" stroke-dasharray="5 3"/></svg>
<div class="a" style="left:549px;top:254px;width:20px;height:10px;background:#808080"></div>
<div class="a" style="left:549px;top:275px;width:12px;height:9px;background:#808080"></div>
<div class="a" style="left:614px;top:211px;width:48px;height:23px;background:#fff;border-radius:2px;box-shadow:0 0 1px rgba(0,0,0,0.12)"><div class="a" style="left:4px;top:4px;width:4px;height:2px;background:#333;transform:rotate(-45deg)"></div><div class="a" style="left:4px;top:8px;width:9px;height:2px;background:#555"></div><div class="a" style="left:4px;top:12px;width:34px;height:1px;background:#c4c4c4"></div><div class="a" style="left:4px;top:15px;width:34px;height:1px;background:#c4c4c4"></div><div class="a" style="left:4px;top:18px;width:14px;height:1px;background:#c4c4c4"></div></div>
<svg class="a" style="left:614px;top:231px" width="10" height="10" viewBox="0 0 10 10"><g fill="#8a38f5"><path d="M5 0.3 L7.2 2.5 L5 4.7 L2.8 2.5Z"/><path d="M5 5.3 L7.2 7.5 L5 9.7 L2.8 7.5Z"/><path d="M2.5 2.8 L4.7 5 L2.5 7.2 L0.3 5Z"/><path d="M7.5 2.8 L9.7 5 L7.5 7.2 L5.3 5Z"/></g></svg>
<div class="a" style="left:626px;top:230px;font-size:10px;line-height:12px;color:#8a38f5;letter-spacing:-0.1px;white-space:nowrap">Lac...</div>
<svg class="a" style="left:614px;top:242px" width="44" height="75"><rect x="0.5" y="0.5" width="43" height="74" rx="2" fill="none" stroke="#b58cf5" stroke-width="1" stroke-dasharray="2 2"/></svg>
<div class="a" style="left:625px;top:254.0px;width:8px;height:6.5px;background:#222"></div>
<div class="a" style="left:625px;top:261.3px;width:8px;height:6.5px;background:#222"></div>
<div class="a" style="left:625px;top:268.6px;width:8px;height:6.5px;background:#222"></div>
<div class="a" style="left:625px;top:275.9px;width:8px;height:6.5px;background:#222"></div>
<div class="a" style="left:625px;top:283.2px;width:8px;height:6.5px;background:#222"></div>
<div class="a" style="left:625px;top:290.5px;width:8px;height:6.5px;background:#222"></div>
<div class="a" style="left:625px;top:297.8px;width:8px;height:6.5px;background:#222"></div>
<div class="a" style="left:638px;top:254px;width:8px;height:6px;background:#222"></div>
<div class="a" style="left:672px;top:211px;width:50px;height:23px;background:#fff;border-radius:2px;box-shadow:0 0 1px rgba(0,0,0,0.12)"><div class="a" style="left:4px;top:4px;width:4px;height:2px;background:#333;transform:rotate(-45deg)"></div><div class="a" style="left:4px;top:8px;width:9px;height:2px;background:#555"></div><div class="a" style="left:4px;top:12px;width:34px;height:1px;background:#c4c4c4"></div><div class="a" style="left:4px;top:15px;width:34px;height:1px;background:#c4c4c4"></div><div class="a" style="left:4px;top:18px;width:14px;height:1px;background:#c4c4c4"></div></div>
<svg class="a" style="left:673px;top:231px" width="10" height="10" viewBox="0 0 10 10"><g fill="#8a38f5"><path d="M5 0.3 L7.2 2.5 L5 4.7 L2.8 2.5Z"/><path d="M5 5.3 L7.2 7.5 L5 9.7 L2.8 7.5Z"/><path d="M2.5 2.8 L4.7 5 L2.5 7.2 L0.3 5Z"/><path d="M7.5 2.8 L9.7 5 L7.5 7.2 L5.3 5Z"/></g></svg>
<div class="a" style="left:685px;top:230px;font-size:10.5px;line-height:12px;color:#8a38f5;letter-spacing:-0.1px;white-space:nowrap">Lack - Shel...</div>
<svg class="a" style="left:672px;top:242px" width="75" height="72"><rect x="0.5" y="0.5" width="74" height="71" rx="2" fill="none" stroke="#b58cf5" stroke-width="1" stroke-dasharray="2 2"/></svg>
<div class="a" style="left:684px;top:253px;width:52px;height:2px;background:#222"></div>
<div class="a" style="left:684px;top:260px;width:30px;height:2px;background:#222"></div>
<div class="a" style="left:684px;top:267px;width:8px;height:2px;background:#222"></div>
<div class="a" style="left:684px;top:274px;width:52px;height:8px;background:#222"></div>
<div class="a" style="left:684px;top:285px;width:30px;height:7px;background:#222"></div>
<div class="a" style="left:684px;top:295px;width:8px;height:7px;background:#222"></div>
<svg class="a" style="left:773px;top:233px" width="10" height="10" viewBox="0 0 10 10"><g fill="#8a38f5"><path d="M5 0.3 L7.2 2.5 L5 4.7 L2.8 2.5Z"/><path d="M5 5.3 L7.2 7.5 L5 9.7 L2.8 7.5Z"/><path d="M2.5 2.8 L4.7 5 L2.5 7.2 L0.3 5Z"/><path d="M7.5 2.8 L9.7 5 L7.5 7.2 L5.3 5Z"/></g></svg>
<div class="a" style="left:785px;top:232px;font-size:10px;line-height:12px;color:#8a38f5;letter-spacing:-0.1px;white-space:nowrap">...</div>
<div class="a" style="left:773px;top:245px;width:24px;height:66px;background:#d9d9d9;border:1px solid #cfcfcf"></div>
<div class="a" style="left:803px;top:246px;width:1.5px;height:54px;background:#8aa8b0"></div>
<div class="a" style="left:803px;top:236px;font-size:10px;line-height:12px;color:#8a38f5;letter-spacing:-0.1px;white-space:nowrap">...</div>
<svg class="a" style="left:773px;top:310px" width="10" height="10" viewBox="0 0 10 10"><g fill="#8a38f5"><path d="M5 0.3 L7.2 2.5 L5 4.7 L2.8 2.5Z"/><path d="M5 5.3 L7.2 7.5 L5 9.7 L2.8 7.5Z"/><path d="M2.5 2.8 L4.7 5 L2.5 7.2 L0.3 5Z"/><path d="M7.5 2.8 L9.7 5 L7.5 7.2 L5.3 5Z"/></g></svg>
<div class="a" style="left:785px;top:309px;font-size:10px;line-height:12px;color:#8a38f5;letter-spacing:-0.1px;white-space:nowrap">...</div>
<div class="a" style="left:772px;top:322px;width:22px;height:9px;background:#dedede;border:1px solid #cfcfcf;border-radius:2px"></div>
<div class="a" style="left:772px;top:330px;font-size:9px;line-height:12px;color:#8a38f5;letter-spacing:-0.1px;white-space:nowrap">...</div>
<div class="a" style="left:772px;top:339px;width:22px;height:15px;background:#dedede;border:1px solid #cfcfcf"></div>
<svg class="a" style="left:540px;top:328px" width="10" height="10" viewBox="0 0 10 10"><g fill="#8a38f5"><path d="M5 0.3 L7.2 2.5 L5 4.7 L2.8 2.5Z"/><path d="M5 5.3 L7.2 7.5 L5 9.7 L2.8 7.5Z"/><path d="M2.5 2.8 L4.7 5 L2.5 7.2 L0.3 5Z"/><path d="M7.5 2.8 L9.7 5 L7.5 7.2 L5.3 5Z"/></g></svg>
<div class="a" style="left:552px;top:327px;font-size:10px;line-height:12px;color:#8a38f5;letter-spacing:-0.1px;white-space:nowrap">...</div>
<div class="a" style="left:540px;top:339px;width:25px;height:42px;background:#231f20;border-radius:4px"></div>
<div class="a" style="left:294px;top:370px;width:38px;height:43px;background:#fff"></div>
<svg class="a" style="left:297px;top:372px" width="32" height="40" viewBox="0 0 32 40"><g stroke="#111" stroke-width="1.3" fill="none"><path d="M2 2 V36 M26 2 V34 M7 5 V39 M30 5 V38"/><path d="M2 3 H26 L30 5 H7 Z"/><path d="M2 17 H26 L30 19 H7 Z"/><path d="M2 31 H26 L30 33 H7 Z"/></g><g fill="#111"><path d="M2 17 H26 L30 19 H7Z"/><path d="M2 31 H26 L30 33 H7Z"/></g></svg>
<div class="a" style="left:334px;top:361px;font-size:10px;line-height:12px;color:#8f8f8f;letter-spacing:-0.1px;white-space:nowrap">Fr...</div>
<svg class="a" style="left:334px;top:371px" width="24" height="31" viewBox="0 0 24 31"><rect x="0" y="0" width="24" height="31" fill="#dcdcdc"/><g stroke="#888" stroke-width="0.8" fill="none"><path d="M1 2 H23 M1 13 H23 M1 21 H23 M2 2 L22 21 M22 2 L2 21"/></g></svg>
<div class="a" style="left:332px;top:371px;width:1px;height:30px;background:#666"></div>
<div class="a" style="left:338px;top:418px;width:24px;height:16px;background:#000"></div>
<div class="a" style="left:397px;top:333px;width:48px;height:26px;background:#fff;border-radius:2px;box-shadow:0 0 1px rgba(0,0,0,0.12)"><div class="a" style="left:4px;top:4px;width:4px;height:2px;background:#333;transform:rotate(-45deg)"></div><div class="a" style="left:4px;top:8px;width:9px;height:2px;background:#555"></div><div class="a" style="left:4px;top:12px;width:34px;height:1px;background:#c4c4c4"></div><div class="a" style="left:4px;top:15px;width:34px;height:1px;background:#c4c4c4"></div><div class="a" style="left:4px;top:18px;width:14px;height:1px;background:#c4c4c4"></div></div>
<svg class="a" style="left:396px;top:353px" width="10" height="10" viewBox="0 0 10 10"><g fill="#8a38f5"><path d="M5 0.3 L7.2 2.5 L5 4.7 L2.8 2.5Z"/><path d="M5 5.3 L7.2 7.5 L5 9.7 L2.8 7.5Z"/><path d="M2.5 2.8 L4.7 5 L2.5 7.2 L0.3 5Z"/><path d="M7.5 2.8 L9.7 5 L7.5 7.2 L5.3 5Z"/></g></svg>
<div class="a" style="left:408px;top:352px;font-size:11px;line-height:12px;color:#8a38f5;letter-spacing:-0.1px;white-space:nowrap">PAX</div>
<svg class="a" style="left:396px;top:365px" width="50" height="89"><rect x="0.75" y="0.75" width="48.5" height="87.5" rx="3" fill="none" stroke="#a66ef6" stroke-width="1.3" stroke-dasharray="5 3"/></svg>
<div class="a" style="left:407px;top:376px;width:28px;height:64px;background:#fff;border:1px solid #e0e0e0"></div>
<div class="a" style="left:407px;top:397px;width:28px;height:1px;background:#ddd"></div>
<div class="a" style="left:407px;top:418px;width:28px;height:1px;background:#ddd"></div>
<div class="a" style="left:407px;top:439px;width:28px;height:2px;background:#ccc"></div>
<svg class="a" style="left:459px;top:402px" width="10" height="10" viewBox="0 0 10 10"><g fill="#8a38f5"><path d="M5 0.3 L7.2 2.5 L5 4.7 L2.8 2.5Z"/><path d="M5 5.3 L7.2 7.5 L5 9.7 L2.8 7.5Z"/><path d="M2.5 2.8 L4.7 5 L2.5 7.2 L0.3 5Z"/><path d="M7.5 2.8 L9.7 5 L7.5 7.2 L5.3 5Z"/></g></svg>
<div class="a" style="left:471px;top:401px;font-size:10px;line-height:12px;color:#8a38f5;letter-spacing:-0.1px;white-space:nowrap">Eke...</div>
<svg class="a" style="left:460px;top:413px" width="41" height="40"><rect x="0.5" y="0.5" width="40" height="39" rx="2" fill="none" stroke="#b58cf5" stroke-width="1" stroke-dasharray="2 2"/></svg>
<div class="a" style="left:471px;top:425px;width:22px;height:2px;background:#b08a58"></div>
<div class="a" style="left:472px;top:435px;width:1px;height:3px;background:#b08a58"></div>
<div class="a" style="left:491px;top:435px;width:1px;height:3px;background:#b08a58"></div>
<svg class="a" style="left:508px;top:401px" width="10" height="10" viewBox="0 0 10 10"><g fill="#8a38f5"><path d="M5 0.3 L7.2 2.5 L5 4.7 L2.8 2.5Z"/><path d="M5 5.3 L7.2 7.5 L5 9.7 L2.8 7.5Z"/><path d="M2.5 2.8 L4.7 5 L2.5 7.2 L0.3 5Z"/><path d="M7.5 2.8 L9.7 5 L7.5 7.2 L5.3 5Z"/></g></svg>
<div class="a" style="left:520px;top:400px;font-size:10px;line-height:12px;color:#8a38f5;letter-spacing:-0.1px;white-space:nowrap">UCS...</div>
<svg class="a" style="left:508px;top:412px" width="44" height="24"><rect x="0.5" y="0.5" width="43" height="23" rx="2" fill="none" stroke="#b58cf5" stroke-width="1" stroke-dasharray="2 2"/></svg>
<svg class="a" style="left:510px;top:415px" width="40" height="20" viewBox="0 0 40 20"><path d="M2 3 H12 L15 4 H19 V7 H14 V9 H3 Z" fill="#c0c0c0" stroke="#666" stroke-width="0.5"/><path d="M3.5 9 V18 M6 9 V18 M10 9 V18 M12.5 9 V18" stroke="#777" stroke-width="1.1"/><rect x="24" y="2" width="13" height="16" fill="#d8d8d8"/><rect x="25" y="4" width="9" height="14" fill="#3a4050"/><rect x="27" y="6" width="4" height="8" fill="#9098a8"/></svg>
<div class="a" style="left:508px;top:436px;font-size:9px;line-height:12px;color:#8a38f5;letter-spacing:-0.1px;white-space:nowrap">.....</div>
<div class="a" style="left:509px;top:446px;width:3px;height:8px;background:#b07060"></div>
<div class="a" style="left:516px;top:447px;width:6px;height:4px;background:#333"></div>
<div class="a" style="left:530px;top:444px;width:7px;height:10px;background:#f4f4f4;border:1px solid #ddd"></div>
<div class="a" style="left:539px;top:445px;width:18px;height:9px;background:linear-gradient(90deg,#6a4a30,#c0a080 40%,#5a3a2a 70%,#a08060)"></div>
<svg class="a" style="left:573px;top:403px" width="26" height="50" viewBox="0 0 26 50"><path d="M10 2.5 Q13 1 15 3 L15 5 L10 5 Z" fill="#222"/><ellipse cx="12.5" cy="5.5" rx="2.4" ry="2.8" fill="#e8b898"/><path d="M8 10 Q12.5 8 17 10 L18 24 L9 24 Z" fill="#555"/><path d="M8.5 10.5 L3 17 L8 21" fill="none" stroke="#555" stroke-width="2.4" stroke-linejoin="round"/><path d="M17 11 L18.5 20" fill="none" stroke="#555" stroke-width="2.2"/><rect x="17" y="17" width="5" height="8" fill="#ddd" stroke="#bbb" stroke-width="0.4"/><path d="M10.5 24 L9 46 M15.5 24 L16 46" stroke="#111" stroke-width="3.3"/><path d="M6 47.5 H11 M14 47.5 H19" stroke="#111" stroke-width="2"/></svg>
<svg class="a" style="left:614px;top:329px" width="10" height="10" viewBox="0 0 10 10"><g fill="#8a38f5"><path d="M5 0.3 L7.2 2.5 L5 4.7 L2.8 2.5Z"/><path d="M5 5.3 L7.2 7.5 L5 9.7 L2.8 7.5Z"/><path d="M2.5 2.8 L4.7 5 L2.5 7.2 L0.3 5Z"/><path d="M7.5 2.8 L9.7 5 L7.5 7.2 L5.3 5Z"/></g></svg>
<div class="a" style="left:626px;top:328px;font-size:10px;line-height:12px;color:#8a38f5;letter-spacing:-0.1px;white-space:nowrap">Desk</div>
<svg class="a" style="left:614px;top:340px" width="69" height="81"><rect x="0.5" y="0.5" width="68" height="80" rx="2" fill="none" stroke="#b58cf5" stroke-width="1" stroke-dasharray="2 2"/></svg>
<div class="a" style="left:621px;top:347px;width:55px;height:19px;background:#fff;border:1px solid #d8d8d8;border-radius:2px"><div class="a" style="left:19px;top:2px;width:16px;height:8px;background:#555"></div><div class="a" style="left:22px;top:5px;width:10px;height:2px;background:#fff"></div><div class="a" style="left:17px;top:12px;width:20px;height:1px;background:#bbb"></div></div>
<div class="a" style="left:621px;top:371px;width:44px;height:22px;background:#fff;border:1px solid #d8d8d8;border-radius:2px"><div class="a" style="left:14px;top:2px;width:16px;height:8px;background:#555"></div><div class="a" style="left:17px;top:5px;width:10px;height:2px;background:#fff"></div><div class="a" style="left:12px;top:12px;width:20px;height:1px;background:#bbb"></div></div>
<div class="a" style="left:621px;top:398px;width:44px;height:17px;background:#fff;border:1px solid #d8d8d8;border-radius:2px"><div class="a" style="left:14px;top:2px;width:16px;height:8px;background:#555"></div><div class="a" style="left:17px;top:5px;width:10px;height:2px;background:#fff"></div><div class="a" style="left:12px;top:12px;width:20px;height:1px;background:#bbb"></div></div>
<div class="a" style="left:614px;top:423px;font-size:9px;line-height:12px;color:#8a38f5;letter-spacing:-0.1px;white-space:nowrap">...</div>
<div class="a" style="left:613px;top:433px;width:18px;height:8px;background:#555;border:1px solid #444"></div>
<div class="a" style="left:617px;top:436px;width:10px;height:2px;background:#fff"></div>
<svg class="a" style="left:695px;top:329px" width="10" height="10" viewBox="0 0 10 10"><g fill="#8a38f5"><path d="M5 0.3 L7.2 2.5 L5 4.7 L2.8 2.5Z"/><path d="M5 5.3 L7.2 7.5 L5 9.7 L2.8 7.5Z"/><path d="M2.5 2.8 L4.7 5 L2.5 7.2 L0.3 5Z"/><path d="M7.5 2.8 L9.7 5 L7.5 7.2 L5.3 5Z"/></g></svg>
<div class="a" style="left:707px;top:328px;font-size:10px;line-height:12px;color:#8a38f5;letter-spacing:-0.1px;white-space:nowrap">S...</div>
<svg class="a" style="left:695px;top:341px" width="30" height="38"><rect x="0.5" y="0.5" width="29" height="37" rx="2" fill="none" stroke="#b58cf5" stroke-width="1" stroke-dasharray="2 2"/></svg>
<div class="a" style="left:701px;top:358px;width:17px;height:11px;background:linear-gradient(135deg,#c03050,#3050c0 40%,#d04080 70%,#3040a0)"></div>
<div class="a" style="left:700px;top:349px;width:19px;height:1px;background:#ccc"></div>
<div class="a" style="left:740px;top:334px;font-size:9px;line-height:12px;color:#8a38f5;letter-spacing:-0.1px;white-space:nowrap">...</div>
<svg class="a" style="left:739px;top:345px" width="22" height="20" viewBox="0 0 22 20"><ellipse cx="11" cy="4" rx="9" ry="3" fill="#bbb" stroke="#666" stroke-width="1"/><path d="M3 5 Q2 14 5 16 M19 5 Q20 14 17 16" stroke="#777" stroke-width="2" fill="none"/><rect x="6" y="8" width="10" height="9" rx="3" fill="#999" stroke="#666"/></svg>
<svg class="a" style="left:695px;top:382px" width="10" height="10" viewBox="0 0 10 10"><g fill="#8a38f5"><path d="M5 0.3 L7.2 2.5 L5 4.7 L2.8 2.5Z"/><path d="M5 5.3 L7.2 7.5 L5 9.7 L2.8 7.5Z"/><path d="M2.5 2.8 L4.7 5 L2.5 7.2 L0.3 5Z"/><path d="M7.5 2.8 L9.7 5 L7.5 7.2 L5.3 5Z"/></g></svg>
<div class="a" style="left:707px;top:381px;font-size:10px;line-height:12px;color:#8a38f5;letter-spacing:-0.1px;white-space:nowrap">VEDBO</div>
<svg class="a" style="left:694px;top:394px" width="71" height="52"><rect x="0.5" y="0.5" width="70" height="51" rx="2" fill="none" stroke="#b58cf5" stroke-width="1" stroke-dasharray="2 2"/></svg>
<svg class="a" style="left:704px;top:404px" width="52" height="34" viewBox="0 0 52 34"><path d="M6 6 Q10 2 18 3 L20 18 L10 22 Z" fill="#555"/><path d="M2 16 L20 16 L18 24 L6 24Z" fill="#4a4a4a"/><path d="M6 24 L3 33 M17 24 L20 33" stroke="#c8a070" stroke-width="1.3"/><path d="M30 6 Q40 2 48 6 L48 24 Q40 29 31 25 Z" fill="#888"/></svg>
<div class="a" style="left:401px;top:495px;width:104px;height:20px;background:#e6e6e6;border:1px solid #d6d6d6;border-radius:4px;font-weight:bold;font-size:9.6px;line-height:18px;letter-spacing:-0.3px;color:#1e1e1e;padding-left:5px;white-space:nowrap">Bookshelf References</div>
<div class="a" style="left:400px;top:519px;width:429px;height:266px;background:#e5e5e5;border:1px solid #d9d9d9;border-radius:2px"></div>
<div class="a" style="left:414px;top:559px;font-size:10px;line-height:12px;color:#8f8f8f;letter-spacing:-0.1px;white-space:nowrap">Eket - Refer...</div>
<div class="a" style="left:414px;top:570px;width:65px;height:45px;background:#fff;border-radius:5px"></div><svg class="a" style="left:414px;top:570px" width="65" height="45" viewBox="0 0 65 45"><path d="M5 14 L16 13 L18 15 L18 31 L6 32 Z" fill="#4a4646"/><path d="M16 13 L18 15 V31 L16 30 Z" fill="#2e2a2a"/><path d="M27 7 L57 5 L60 8 V40 L28 39 Z" fill="#3c3838"/><g fill="#262222"><rect x="30" y="10" width="12" height="12"/><rect x="45" y="9" width="12" height="12"/><rect x="30" y="25" width="12" height="12"/><rect x="45" y="24" width="12" height="12"/></g><path d="M57 5 L60 8 V40 L57 38 Z" fill="#2a2626"/></svg>
<div class="a" style="left:487px;top:541px;width:75px;height:19px;background:#fff;border-radius:2px;box-shadow:0 0 1px rgba(0,0,0,0.12)"><div class="a" style="left:4px;top:4px;width:4px;height:2px;background:#333;transform:rotate(-45deg)"></div><div class="a" style="left:4px;top:8px;width:9px;height:2px;background:#555"></div><div class="a" style="left:4px;top:12px;width:34px;height:1px;background:#c4c4c4"></div></div>
<div class="a" style="left:488px;top:559px;font-size:10px;line-height:12px;color:#8f8f8f;letter-spacing:-0.1px;white-space:nowrap">Reference</div>
<div class="a" style="left:488px;top:570px;width:136px;height:71px;background:#fff"></div>
<svg class="a" style="left:488px;top:570px" width="136" height="71" viewBox="0 0 136 71"><g stroke="#9a9a9a" stroke-width="1.1" fill="none"><path d="M17 13 V60 M38 13 V60 M48 13 V60 M58 13 V60"/><path d="M17 14 H38 M17 24 H38 M17 34 H38 M17 44 H38 M17 54 H38"/><path d="M48 14 H58 M48 24 H58 M48 34 H58 M48 44 H58 M48 54 H58"/></g><g stroke="#cfcfcf" stroke-width="1.5"><path d="M17 14 H38 M17 24 H38 M17 34 H38 M17 44 H38 M17 54 H38 M48 14 H58 M48 24 H58 M48 34 H58 M48 44 H58 M48 54 H58"/></g><g stroke="#4a7ad8" stroke-width="0.5" stroke-dasharray="1 1" opacity="0.8"><path d="M13 12 V60 M17 10 H38 M48 10 H58 M52 40 V50 M52 55 V62"/></g><g stroke="#e0c8a0" stroke-width="1.4" fill="none"><path d="M70 12 V62 M93 12 V62 M74 12 V58 M89 12 V58"/></g><g stroke="#dedede" stroke-width="1.3"><path d="M70 22 H93 M70 33 H93 M70 44 H93 M70 55 H93"/></g><rect x="100" y="8" width="25" height="56" fill="#c9c6c0"/><g fill="#f4f0e8"><rect x="102" y="20" width="2" height="42"/><rect x="121" y="20" width="2" height="42"/><rect x="102" y="29" width="21" height="1.5"/><rect x="102" y="38" width="21" height="1.5"/><rect x="102" y="48" width="21" height="1.5"/></g><g fill="#d8c8a8"><rect x="102" y="19" width="21" height="1.5"/></g><circle cx="108" cy="16" r="3" fill="#8a8070"/><path d="M115 8 L117 16 L113 16 Z" fill="#5a7a40"/><rect x="104" y="22" width="6" height="6" fill="#9a9aa8"/><rect x="106" y="32" width="5" height="5" fill="#6a5a5a"/><rect x="104" y="41" width="8" height="6" fill="#7a7a6a"/><rect x="103" y="52" width="19" height="9" fill="#b89a6a"/><rect x="100" y="62" width="25" height="2" fill="#a89070"/></svg>
<div class="a" style="left:631px;top:541px;width:75px;height:19px;background:#fff;border-radius:2px;box-shadow:0 0 1px rgba(0,0,0,0.12)"><div class="a" style="left:4px;top:4px;width:4px;height:2px;background:#333;transform:rotate(-45deg)"></div><div class="a" style="left:4px;top:8px;width:9px;height:2px;background:#555"></div><div class="a" style="left:4px;top:12px;width:34px;height:1px;background:#c4c4c4"></div></div>
<div class="a" style="left:632px;top:559px;font-size:10px;line-height:12px;color:#8f8f8f;letter-spacing:-0.1px;white-space:nowrap">Reference</div>
<div class="a" style="left:633px;top:570px;width:167px;height:69px;background:#fff"></div>
<svg class="a" style="left:633px;top:570px" width="167" height="69" viewBox="0 0 167 69"><g stroke="#b0b0b0" stroke-width="1.4" fill="none"><rect x="14" y="12" width="27" height="49"/><path d="M27.5 12 V61 M14 25 H41 M14 37 H41 M14 49 H41"/><rect x="59" y="12" width="14.5" height="49"/></g><g stroke="#4a7ad8" stroke-width="0.5" stroke-dasharray="1 1" opacity="0.8"><path d="M11 12 V61 M14 9 H41 M59 9 H73 M47 34 V46 M30 19 H43"/></g><path d="M82 5 L114 6 L114 64 L82 61 Z" fill="#2a2624"/><g fill="#fff"><rect x="86" y="9" width="10" height="11"/><rect x="100" y="9" width="10" height="11"/><rect x="86" y="23" width="10" height="11"/><rect x="100" y="23" width="10" height="11"/><rect x="86" y="37" width="10" height="11"/><rect x="100" y="37" width="10" height="11"/><rect x="86" y="51" width="10" height="9"/><rect x="100" y="51" width="10" height="9"/></g><rect x="120" y="4" width="39" height="61" fill="#d6d4d0"/><rect x="124" y="6" width="33" height="57" fill="#262424"/><g fill="#3a3838"><rect x="140" y="21" width="15" height="13"/><rect x="126" y="35" width="13" height="13"/></g><g fill="#555"><rect x="126" y="48" width="13" height="13"/><rect x="141" y="48" width="13" height="13"/></g><rect x="128" y="10" width="8" height="9" fill="#e8e4dc"/><rect x="142" y="13" width="10" height="5" fill="#e8e4dc"/><rect x="143" y="40" width="7" height="5" fill="#a08040"/><rect x="120" y="63" width="39" height="2" fill="#8a8a9a"/></svg>
<div class="a" style="left:482px;top:655px;width:75px;height:20px;background:#fff;border-radius:2px;box-shadow:0 0 1px rgba(0,0,0,0.12)"><div class="a" style="left:4px;top:4px;width:4px;height:2px;background:#333;transform:rotate(-45deg)"></div><div class="a" style="left:4px;top:8px;width:9px;height:2px;background:#555"></div><div class="a" style="left:4px;top:12px;width:34px;height:1px;background:#c4c4c4"></div></div>
<div class="a" style="left:483px;top:674px;font-size:10px;line-height:12px;color:#8f8f8f;letter-spacing:-0.1px;white-space:nowrap">Reference</div>
<div class="a" style="left:483px;top:685px;width:171px;height:65px;background:#fff"></div>
<svg class="a" style="left:483px;top:685px" width="171" height="65" viewBox="0 0 171 65"><g stroke="#a8a8a8" stroke-width="1.3" fill="none"><rect x="15" y="14" width="32" height="43"/><path d="M15 27.5 H47 M15 40.5 H47 M15 53 H47"/><rect x="64" y="14" width="12" height="43" rx="1"/></g><g stroke="#4a7ad8" stroke-width="0.5" stroke-dasharray="1 1" opacity="0.8"><path d="M12 14 V57 M15 11 H47 M64 11 H76 M17 34 H45 M50 34 H60"/></g><path d="M86 9 L120 10 V57 L86 55 Z" fill="#1a1a1a"/><g fill="#2e2e2e"><path d="M88 26 H116 V28 H88Z"/><path d="M88 41 H116 V43 H88Z"/></g><rect x="126" y="7" width="38" height="52" fill="#d0d0d0"/><rect x="128" y="9" width="33" height="48" fill="#2a2a2a"/><g fill="#ece8e4"><rect x="131" y="12" width="25" height="11"/><rect x="131" y="26" width="25" height="12"/><rect x="131" y="40" width="25" height="13"/></g><g fill="#c05a40"><rect x="136" y="13" width="1.5" height="9"/><rect x="146" y="28" width="1.5" height="9"/><rect x="142" y="42" width="1.5" height="10"/></g><g fill="#a0a8c0"><rect x="140" y="13" width="1.5" height="9"/><rect x="134" y="28" width="1.5" height="9"/><rect x="150" y="42" width="1.5" height="10"/></g></svg>
<div class="a" style="left:661px;top:654px;width:75px;height:22px;background:#fff;border-radius:2px;box-shadow:0 0 1px rgba(0,0,0,0.12)"><div class="a" style="left:4px;top:4px;width:4px;height:2px;background:#333;transform:rotate(-45deg)"></div><div class="a" style="left:4px;top:8px;width:9px;height:2px;background:#555"></div><div class="a" style="left:4px;top:12px;width:34px;height:1px;background:#c4c4c4"></div><div class="a" style="left:4px;top:15px;width:14px;height:1px;background:#c4c4c4"></div></div>
<div class="a" style="left:661px;top:674px;font-size:10px;line-height:12px;color:#8f8f8f;letter-spacing:-0.1px;white-space:nowrap">Reference</div>
<div class="a" style="left:662px;top:686px;width:138px;height:75px;background:#fff"></div>
<svg class="a" style="left:662px;top:686px" width="138" height="75" viewBox="0 0 138 75"><g stroke="#a8a8a8" stroke-width="1.2" fill="none"><rect x="14" y="13" width="20" height="49"/><path d="M14 21.6 H34 M14 29.6 H34 M14 37.1 H34 M14 44.6 H34 M14 52.6 H34 M14 59.6 H34"/><rect x="54.4" y="13" width="7.5" height="49" rx="1"/></g><g stroke="#4a7ad8" stroke-width="0.5" stroke-dasharray="1 1" opacity="0.8"><path d="M11 13 V62 M14 10 H34 M54 10 H62 M16 36 H32 M38 36 H50"/></g><rect x="71" y="9" width="25" height="58" fill="#4a5062"/><rect x="73" y="12" width="19" height="53" fill="#e8e8e4"/><g fill="#b8b8b8"><rect x="73" y="19" width="19" height="1.2"/><rect x="73" y="27" width="19" height="1.2"/><rect x="73" y="35" width="19" height="1.2"/><rect x="73" y="43" width="19" height="1.2"/><rect x="73" y="51" width="19" height="1.2"/><rect x="73" y="59" width="19" height="1.2"/></g><rect x="87" y="29" width="4" height="5" fill="#222"/><rect x="76" y="22" width="3" height="4" fill="#3a6050"/><rect x="75" y="45" width="8" height="5" fill="#9aaac8"/><rect x="103" y="10" width="22" height="55" fill="#f2f2ec" stroke="#e0e0d8" stroke-width="0.8"/><g stroke="#dcdcd4" stroke-width="0.8"><path d="M105 18 H123 M105 27 H123 M105 36 H123 M105 45 H123 M105 54 H123"/><path d="M106 12 V63"/></g></svg>
<div class="a" style="left:375px;top:846px;width:130px;height:20px;background:#e6e6e6;border:1px solid #d6d6d6;border-radius:4px;font-weight:bold;font-size:9.6px;line-height:18px;letter-spacing:-0.3px;color:#1e1e1e;padding-left:5px;white-space:nowrap">Floorplan Layout Reference</div>
<div class="a" style="left:375px;top:871px;width:241px;height:80px;background:#e5e5e5;border:1px solid #d9d9d9;border-radius:2px"></div>
<div class="a" style="left:409px;top:897px;font-size:10px;line-height:12px;color:#8f8f8f;letter-spacing:-0.1px;white-space:nowrap">Studio</div>
<div class="a" style="left:409px;top:908px;width:115px;height:40px;background:#fff"><div class="a" style="left:48px;top:3px;width:18px;height:2px;background:#555"></div><div class="a" style="left:10px;top:17px;width:94px;height:20px;border:1.5px solid #111"></div><div class="a" style="left:70px;top:17px;width:1.5px;height:20px;background:#111"></div></div>
<div class="a" style="left:843px;top:151px;width:83px;height:20px;background:#e6e6e6;border:1px solid #d6d6d6;border-radius:4px;font-weight:bold;font-size:9.6px;line-height:18px;letter-spacing:-0.3px;color:#1e1e1e;padding-left:5px;white-space:nowrap">Top View Layout</div>
<div class="a" style="left:843px;top:176px;width:520px;height:179px;background:#e5e5e5;border:1px solid #d9d9d9;border-radius:2px"></div>
<div class="a" style="left:862px;top:198px;font-size:10px;line-height:12px;color:#8f8f8f;letter-spacing:-0.1px;white-space:nowrap">Room Outline</div>
<div class="a" style="left:870px;top:194px;width:25px;height:2px;background:#bdbdbd"></div>
<div class="a" style="left:919px;top:203px;width:26px;height:2px;background:#bdbdbd"></div>
<svg class="a" style="left:860px;top:208px" width="88" height="83" viewBox="0 0 88 83"><path d="M3 4 H9 V1.5 H86 V81 H1.5 V4 Z" fill="none" stroke="#111" stroke-width="2.2"/><path d="M4 6 H11 V4 H83.5 V78.5 H4 Z" fill="none" stroke="#fff" stroke-width="1"/></svg>
<svg class="a" style="left:895px;top:300px" width="52" height="35" viewBox="0 0 52 35"><g fill="none" stroke="#b5b5b5" stroke-width="1"><path d="M3 30 V16 A14 14 0 0 1 17 30 Z"/><path d="M17 20 A16 16 0 0 1 49 20 H36"/><path d="M3 32 H17"/></g><rect x="23" y="17" width="15" height="15" fill="#c4c4c4"/><rect x="17" y="19" width="6" height="2" fill="#999"/></svg>
<div class="a" style="left:975px;top:212px;font-size:10px;line-height:12px;color:#555;letter-spacing:-0.1px;white-space:nowrap">Office Floor Pla...</div>
<svg class="a" style="left:973px;top:221px" width="86" height="91" viewBox="0 0 86 91"><rect x="1" y="1" width="84" height="89" fill="#f3f3f3"/><rect x="2" y="2" width="76" height="9" fill="#777"/><g stroke="#666" stroke-width="0.6"><path d="M21 2 V11 M40 2 V11 M59 2 V11"/></g><rect x="17" y="14" width="25" height="26" rx="2" fill="#222"/><ellipse cx="29" cy="29" rx="9" ry="4" fill="#ccc"/><rect x="2" y="36" width="55" height="19" fill="#fff" stroke="#e0e0e0" stroke-width="0.6"/><rect x="19" y="38" width="18" height="8" fill="#555"/><rect x="22" y="41" width="10" height="2" fill="#fff"/><rect x="18" y="48" width="20" height="0.8" fill="#aaa"/><rect x="2" y="55" width="10" height="15" fill="#777"/><path d="M8 66 Q18 58 28 64 L32 76 Q20 83 6 78 Z" fill="#777"/><rect x="9" y="80" width="47" height="8" fill="#222"/><path d="M61 89 A24 24 0 0 1 85 65" fill="none" stroke="#999" stroke-width="0.6"/><path d="M1 1 H85 M1 1 V89 M1 89 H85" stroke="#111" stroke-width="2" fill="none"/><path d="M85 2 V51" stroke="#8ab0b8" stroke-width="1"/><path d="M85 52 V64" stroke="#111" stroke-width="2"/></svg>
<div class="a" style="left:1084px;top:212px;font-size:10px;line-height:12px;color:#555;letter-spacing:-0.1px;white-space:nowrap">Office Floor Pla...</div>
<svg class="a" style="left:1082px;top:221px" width="86" height="91" viewBox="0 0 86 91"><rect x="1" y="1" width="84" height="89" fill="#f3f3f3"/><rect x="2" y="2" width="58" height="10" fill="#777"/><rect x="4" y="2" width="52" height="8" fill="#222"/><rect x="2" y="11" width="10" height="58" fill="#777"/><g stroke="#666" stroke-width="0.6"><path d="M2 30 H12 M2 50 H12"/></g><path d="M58 8 Q70 2 82 10 L78 30 Q66 34 56 24 Z" fill="#777"/><rect x="18" y="47" width="25" height="26" rx="3" fill="#222"/><ellipse cx="30" cy="64" rx="8" ry="4" fill="#ccc"/><rect x="3" y="71" width="55" height="12" fill="#fff"/><rect x="23" y="74" width="15" height="7" fill="#555"/><rect x="26" y="76" width="9" height="2" fill="#fff"/><rect x="6" y="81" width="51" height="8" fill="#222"/><path d="M61 89 A24 24 0 0 1 85 65" fill="none" stroke="#999" stroke-width="0.6"/><path d="M1 1 H85 M1 1 V89 M1 89 H85" stroke="#111" stroke-width="2" fill="none"/><path d="M85 2 V28" stroke="#8ab0b8" stroke-width="1"/><path d="M85 43 V57" stroke="#111" stroke-width="2"/></svg>
<div class="a" style="left:1180px;top:212px;font-size:10px;line-height:12px;color:#555;letter-spacing:-0.1px;white-space:nowrap">Office Floor Pla...</div>
<svg class="a" style="left:1178px;top:221px" width="86" height="91" viewBox="0 0 86 91"><rect x="1" y="1" width="84" height="89" fill="#f3f3f3"/><rect x="2" y="2" width="58" height="10" fill="#777"/><rect x="4" y="2" width="52" height="8" fill="#222"/><rect x="2" y="11" width="10" height="58" fill="#777"/><g stroke="#666" stroke-width="0.6"><path d="M2 30 H12 M2 50 H12"/></g><path d="M58 8 Q70 2 82 10 L78 30 Q66 34 56 24 Z" fill="#777"/><ellipse cx="33" cy="66" rx="9" ry="4" fill="#bbb" stroke="#666" stroke-width="0.8"/><rect x="3" y="71" width="55" height="12" fill="#fff"/><rect x="23" y="74" width="15" height="7" fill="#555"/><rect x="26" y="76" width="9" height="2" fill="#fff"/><rect x="6" y="81" width="51" height="8" fill="#222"/><path d="M61 89 A24 24 0 0 1 85 65" fill="none" stroke="#999" stroke-width="0.6"/><path d="M1 1 H85 M1 1 V89 M1 89 H85" stroke="#111" stroke-width="2" fill="none"/><path d="M85 2 V28" stroke="#8ab0b8" stroke-width="1"/><path d="M85 43 V57" stroke="#111" stroke-width="2"/></svg>
<div class="a" style="left:1281px;top:212px;font-size:10px;line-height:12px;color:#555;letter-spacing:-0.1px;white-space:nowrap">Office Floor Pla...</div>
<svg class="a" style="left:1279px;top:221px" width="86" height="91" viewBox="0 0 86 91"><rect x="1" y="1" width="84" height="89" fill="#f3f3f3"/><rect x="2" y="2" width="66" height="10" fill="#777"/><rect x="4" y="2" width="60" height="8" fill="#222"/><rect x="2" y="11" width="10" height="72" fill="#777"/><g stroke="#666" stroke-width="0.6"><path d="M2 30 H12 M2 50 H12"/></g><path d="M66 28 L72 18 L72 36 Z" fill="#777"/><rect x="13" y="65" width="55" height="18" fill="#fff"/><rect x="25" y="69" width="15" height="7" fill="#555"/><rect x="28" y="71" width="9" height="2" fill="#fff"/><rect x="6" y="81" width="62" height="8" fill="#222"/><path d="M1 1 H85 M1 1 V89 M1 89 H85" stroke="#111" stroke-width="2" fill="none"/></svg>
<div class="a" style="left:843px;top:366px;width:94px;height:20px;background:#e6e6e6;border:1px solid #d6d6d6;border-radius:4px;font-weight:bold;font-size:9.6px;line-height:18px;letter-spacing:-0.3px;color:#1e1e1e;padding-left:5px;white-space:nowrap">Office Wall Layouts</div>
<div class="a" style="left:843px;top:391px;width:520px;height:472px;background:#e5e5e5;border:1px solid #d9d9d9;border-radius:2px"></div>
<div class="a" style="left:886px;top:438px;font-size:10px;line-height:12px;color:#8f8f8f;letter-spacing:-0.1px;white-space:nowrap">Office Wall</div>
<svg class="a" style="left:886px;top:450px" width="82" height="67" viewBox="0 0 82 67"><rect width="82" height="66" fill="#c4c4c4"/><rect x="7" y="21" width="31" height="2.2" fill="#5a5a5a"/><rect x="44" y="27.3" width="31" height="2.2" fill="#5a5a5a"/><rect x="0.5" y="45.3" width="74.5" height="18.7" fill="#474747"/><g stroke="#7a7a7a" stroke-width="1"><path d="M9.8 45.3 V64.0"/><path d="M19.1 45.3 V64.0"/><path d="M28.4 45.3 V64.0"/><path d="M37.8 45.3 V64.0"/><path d="M47.1 45.3 V64.0"/><path d="M56.4 45.3 V64.0"/><path d="M65.7 45.3 V64.0"/><path d="M0.5 54.6 H75.0"/></g><rect x="0.5" y="64.0" width="74.5" height="1.2" fill="#c8a070"/><rect x="1.5" y="64.0" width="1.5" height="2.5" fill="#b08050"/><rect x="19.4" y="64.0" width="1.5" height="2.5" fill="#b08050"/><rect x="37.2" y="64.0" width="1.5" height="2.5" fill="#b08050"/><rect x="55.1" y="64.0" width="1.5" height="2.5" fill="#b08050"/><rect x="73.0" y="64.0" width="1.5" height="2.5" fill="#b08050"/><rect x="0.5" y="23.5" width="54" height="33" fill="none" stroke="#e04040" stroke-width="0.7"/></svg>
<div class="a" style="left:974px;top:438px;font-size:10px;line-height:12px;color:#8f8f8f;letter-spacing:-0.1px;white-space:nowrap">Office Wall</div>
<svg class="a" style="left:974px;top:450px" width="82" height="67" viewBox="0 0 82 67"><rect width="82" height="66" fill="#fff"/><g transform="translate(3 -4) scale(0.7)"><path d="M2 3 H12 L14 5 H17 V7 H13 V8 H3 Z" fill="#b8b8b8" stroke="#555" stroke-width="0.5"/><path d="M3 8 V15 M5 8 V15 M10 8 V15 M12 8 V15" stroke="#666" stroke-width="1"/></g><g transform="translate(3 8) scale(0.7)"><path d="M2 3 H12 L14 5 H17 V7 H13 V8 H3 Z" fill="#b8b8b8" stroke="#555" stroke-width="0.5"/><path d="M3 8 V15 M5 8 V15 M10 8 V15 M12 8 V15" stroke="#666" stroke-width="1"/></g><rect x="0" y="10" width="82" height="1.6" fill="#555"/><rect x="0" y="22" width="82" height="1.6" fill="#555"/><rect x="0.5" y="45.3" width="75" height="18.7" fill="#474747"/><g stroke="#7a7a7a" stroke-width="1"><path d="M9.9 45.3 V64.0"/><path d="M19.2 45.3 V64.0"/><path d="M28.6 45.3 V64.0"/><path d="M38.0 45.3 V64.0"/><path d="M47.4 45.3 V64.0"/><path d="M56.8 45.3 V64.0"/><path d="M66.1 45.3 V64.0"/><path d="M0.5 54.6 H75.5"/></g><rect x="0.5" y="64.0" width="75" height="1.2" fill="#c8a070"/><rect x="1.5" y="64.0" width="1.5" height="2.5" fill="#b08050"/><rect x="19.5" y="64.0" width="1.5" height="2.5" fill="#b08050"/><rect x="37.5" y="64.0" width="1.5" height="2.5" fill="#b08050"/><rect x="55.5" y="64.0" width="1.5" height="2.5" fill="#b08050"/><rect x="73.5" y="64.0" width="1.5" height="2.5" fill="#b08050"/><rect x="0.5" y="45.3" width="53" height="9.3" fill="#222" opacity="0.35"/><path d="M3 33 L6 32 L9 38 L11 41 L7 40 L6 43 L4 43 Z" fill="#3a7a50"/><rect x="4" y="35" width="2.5" height="7" fill="#b03030"/><rect x="3.5" y="42" width="3" height="1.5" fill="#2a4a8a"/><rect x="0.5" y="23.5" width="53" height="33" fill="none" stroke="#e04040" stroke-width="0.7"/></svg>
<div class="a" style="left:1094px;top:438px;font-size:10px;line-height:12px;color:#8f8f8f;letter-spacing:-0.1px;white-space:nowrap">Office Wall</div>
<svg class="a" style="left:1094px;top:450px" width="81" height="67" viewBox="0 0 81 67"><rect width="81" height="66" fill="#fff"/><g transform="translate(2 -2) scale(0.75)"><path d="M2 3 H12 L14 5 H17 V7 H13 V8 H3 Z" fill="#b8b8b8" stroke="#555" stroke-width="0.5"/><path d="M3 8 V15 M5 8 V15 M10 8 V15 M12 8 V15" stroke="#666" stroke-width="1"/></g><rect x="12" y="6" width="2" height="1.5" fill="#c04040"/><rect x="12" y="7.5" width="2" height="3" fill="#e0d0c0"/><rect x="12" y="10.5" width="2.5" height="2.5" fill="#a03030"/><g transform="translate(2 10) scale(0.75)"><path d="M2 3 H12 L14 5 H17 V7 H13 V8 H3 Z" fill="#b8b8b8" stroke="#555" stroke-width="0.5"/><path d="M3 8 V15 M5 8 V15 M10 8 V15 M12 8 V15" stroke="#666" stroke-width="1"/></g><rect x="0" y="12" width="52" height="1.4" fill="#555"/><rect x="0" y="24" width="52" height="1.4" fill="#555"/><rect x="56.7" y="8" width="18.3" height="55.7" fill="#474747"/><g stroke="#7a7a7a" stroke-width="1"><path d="M65.9 8 V63.7"/><path d="M56.7 35.9 H75.0"/></g><rect x="56.7" y="63.7" width="18.3" height="1.2" fill="#c8a070"/><rect x="57.7" y="63.7" width="1.5" height="2.5" fill="#b08050"/><rect x="61.5" y="63.7" width="1.5" height="2.5" fill="#b08050"/><rect x="65.4" y="63.7" width="1.5" height="2.5" fill="#b08050"/><rect x="69.2" y="63.7" width="1.5" height="2.5" fill="#b08050"/><rect x="73.0" y="63.7" width="1.5" height="2.5" fill="#b08050"/><g stroke="#7a7a7a" stroke-width="1"><path d="M56.7 17 H75 M56.7 26 H75 M56.7 35 H75 M56.7 44 H75 M56.7 54 H75"/></g><rect x="0.5" y="45.1" width="56.2" height="18.6" fill="#474747"/><g stroke="#7a7a7a" stroke-width="1"><path d="M9.9 45.1 V63.7"/><path d="M19.2 45.1 V63.7"/><path d="M28.6 45.1 V63.7"/><path d="M38.0 45.1 V63.7"/><path d="M47.3 45.1 V63.7"/><path d="M0.5 54.4 H56.7"/></g><rect x="0.5" y="63.7" width="56.2" height="1.2" fill="#c8a070"/><rect x="1.5" y="63.7" width="1.5" height="2.5" fill="#b08050"/><rect x="14.8" y="63.7" width="1.5" height="2.5" fill="#b08050"/><rect x="28.1" y="63.7" width="1.5" height="2.5" fill="#b08050"/><rect x="41.4" y="63.7" width="1.5" height="2.5" fill="#b08050"/><rect x="54.7" y="63.7" width="1.5" height="2.5" fill="#b08050"/><path d="M3 33 L6 32 L9 38 L11 41 L7 40 L6 43 L4 43 Z" fill="#3a7a50"/><rect x="4" y="35" width="2.5" height="7" fill="#b03030"/><rect x="3.5" y="42" width="3" height="1.5" fill="#2a4a8a"/><rect x="0.5" y="23.7" width="53" height="32.7" fill="none" stroke="#e04040" stroke-width="0.7"/></svg>
<div class="a" style="left:1186px;top:442px;font-size:10px;line-height:12px;color:#8f8f8f;letter-spacing:-0.1px;white-space:nowrap">Office Wall</div>
<svg class="a" style="left:1186px;top:454px" width="81" height="67" viewBox="0 0 81 67"><rect width="81" height="66" fill="#fff"/><rect x="0.5" y="18" width="70.5" height="11.9" fill="#474747"/><g stroke="#7a7a7a" stroke-width="1"><path d="M12.25 18 V29.9 M24 18 V29.9 M35.75 18 V29.9 M47.5 18 V29.9 M59.25 18 V29.9"/></g><rect x="0.5" y="45.4" width="75.6" height="18.4" fill="#474747"/><g stroke="#7a7a7a" stroke-width="1"><path d="M9.9 45.4 V63.8"/><path d="M19.4 45.4 V63.8"/><path d="M28.8 45.4 V63.8"/><path d="M38.3 45.4 V63.8"/><path d="M47.8 45.4 V63.8"/><path d="M57.2 45.4 V63.8"/><path d="M66.6 45.4 V63.8"/><path d="M0.5 54.6 H76.1"/></g><rect x="0.5" y="63.8" width="75.6" height="1.2" fill="#c8a070"/><rect x="1.5" y="63.8" width="1.5" height="2.5" fill="#b08050"/><rect x="19.6" y="63.8" width="1.5" height="2.5" fill="#b08050"/><rect x="37.8" y="63.8" width="1.5" height="2.5" fill="#b08050"/><rect x="55.9" y="63.8" width="1.5" height="2.5" fill="#b08050"/><rect x="74.1" y="63.8" width="1.5" height="2.5" fill="#b08050"/><path d="M3 33 L6 32 L9 38 L11 41 L7 40 L6 43 L4 43 Z" fill="#3a7a50"/><rect x="4" y="35" width="2.5" height="7" fill="#b03030"/><rect x="3.5" y="42" width="3" height="1.5" fill="#2a4a8a"/></svg>
<div class="a" style="left:887px;top:556px;font-size:10px;line-height:12px;color:#8f8f8f;letter-spacing:-0.1px;white-space:nowrap">Office Wall - Current</div>
<div class="a" style="left:886px;top:568px;width:109px;height:99px;background:#f5f5f5;border-radius:2px"></div>
<svg class="a" style="left:900px;top:587px" width="81" height="68" viewBox="0 0 81 68"><rect x="0.5" y="0.5" width="80" height="67" fill="#fff" stroke="#a8a8a8" stroke-width="0.8"/><rect x="6" y="21" width="31" height="3" fill="#5a5a5a"/><rect x="43" y="27" width="31" height="3" fill="#5a5a5a"/><rect x="1" y="45" width="75" height="18" fill="#474747"/><g stroke="#7a7a7a" stroke-width="1"><path d="M10.4 45 V63"/><path d="M19.8 45 V63"/><path d="M29.1 45 V63"/><path d="M38.5 45 V63"/><path d="M47.9 45 V63"/><path d="M57.2 45 V63"/><path d="M66.6 45 V63"/><path d="M1 54.0 H76"/></g><rect x="1" y="63" width="75" height="1.2" fill="#c8a070"/><rect x="2.0" y="63" width="1.5" height="2.5" fill="#b08050"/><rect x="20.0" y="63" width="1.5" height="2.5" fill="#b08050"/><rect x="38.0" y="63" width="1.5" height="2.5" fill="#b08050"/><rect x="56.0" y="63" width="1.5" height="2.5" fill="#b08050"/><rect x="74.0" y="63" width="1.5" height="2.5" fill="#b08050"/><path d="M4 34 L7 33 L10 39 L12 42 L8 41 L7 44 L5 44 Z" fill="#3a7a50"/><rect x="5" y="36" width="2.5" height="7" fill="#b03030"/><rect x="4.5" y="43" width="3" height="1.5" fill="#2a4a8a"/></svg>
<div class="a" style="left:923px;top:575px;width:34px;height:1.5px;background:#555"></div><div class="a" style="left:935px;top:578px;width:10px;height:1px;background:#ccc"></div>
<div class="a" style="left:1004px;top:556px;font-size:10px;line-height:12px;color:#8f8f8f;letter-spacing:-0.1px;white-space:nowrap">Zoom Wall</div>
<div class="a" style="left:1004px;top:568px;width:109px;height:99px;background:#f5f5f5;border-radius:2px"></div>
<svg class="a" style="left:1018px;top:587px" width="81" height="68" viewBox="0 0 81 68"><rect x="0.5" y="0.5" width="80" height="67" fill="#fff" stroke="#a8a8a8" stroke-width="0.8"/><rect x="1" y="18" width="70" height="11" fill="#474747"/><g stroke="#7a7a7a" stroke-width="1"><path d="M12.7 18 V29 M24.3 18 V29 M36 18 V29 M47.7 18 V29 M59.3 18 V29"/></g><rect x="1" y="45" width="76" height="18" fill="#474747"/><g stroke="#7a7a7a" stroke-width="1"><path d="M10.5 45 V63"/><path d="M20.0 45 V63"/><path d="M29.5 45 V63"/><path d="M39.0 45 V63"/><path d="M48.5 45 V63"/><path d="M58.0 45 V63"/><path d="M67.5 45 V63"/><path d="M1 54.0 H77"/></g><rect x="1" y="63" width="76" height="1.2" fill="#c8a070"/><rect x="2.0" y="63" width="1.5" height="2.5" fill="#b08050"/><rect x="20.2" y="63" width="1.5" height="2.5" fill="#b08050"/><rect x="38.5" y="63" width="1.5" height="2.5" fill="#b08050"/><rect x="56.8" y="63" width="1.5" height="2.5" fill="#b08050"/><rect x="75.0" y="63" width="1.5" height="2.5" fill="#b08050"/><path d="M4 34 L7 33 L10 39 L12 42 L8 41 L7 44 L5 44 Z" fill="#3a7a50"/><rect x="5" y="36" width="2.5" height="7" fill="#b03030"/><rect x="4.5" y="43" width="3" height="1.5" fill="#2a4a8a"/></svg>
<div class="a" style="left:1041px;top:575px;width:34px;height:1.5px;background:#555"></div><div class="a" style="left:1053px;top:578px;width:10px;height:1px;background:#ccc"></div>
<div class="a" style="left:1127px;top:556px;font-size:10px;line-height:12px;color:#8f8f8f;letter-spacing:-0.1px;white-space:nowrap">Office Wall - Current</div>
<div class="a" style="left:1126px;top:568px;width:109px;height:99px;background:#f5f5f5;border-radius:2px"></div>
<svg class="a" style="left:1140px;top:587px" width="81" height="68" viewBox="0 0 81 68"><rect x="0.5" y="0.5" width="80" height="67" fill="#fff" stroke="#a8a8a8" stroke-width="0.8"/><rect x="1" y="21" width="52" height="2" fill="#222"/><rect x="53" y="7" width="24" height="38" fill="#474747"/><g stroke="#7a7a7a" stroke-width="1"><path d="M53 26.0 H77"/></g><rect x="53" y="45" width="24" height="1.2" fill="#c8a070"/><rect x="54.0" y="45" width="1.5" height="2.5" fill="#b08050"/><rect x="59.2" y="45" width="1.5" height="2.5" fill="#b08050"/><rect x="64.5" y="45" width="1.5" height="2.5" fill="#b08050"/><rect x="69.8" y="45" width="1.5" height="2.5" fill="#b08050"/><rect x="75.0" y="45" width="1.5" height="2.5" fill="#b08050"/><g stroke="#7a7a7a" stroke-width="1"><path d="M53 16 H77 M53 26 H77 M53 36 H77"/></g><rect x="1" y="45" width="76" height="18" fill="#474747"/><g stroke="#7a7a7a" stroke-width="1"><path d="M10.5 45 V63"/><path d="M20.0 45 V63"/><path d="M29.5 45 V63"/><path d="M39.0 45 V63"/><path d="M48.5 45 V63"/><path d="M58.0 45 V63"/><path d="M67.5 45 V63"/><path d="M1 54.0 H77"/></g><rect x="1" y="63" width="76" height="1.2" fill="#c8a070"/><rect x="2.0" y="63" width="1.5" height="2.5" fill="#b08050"/><rect x="20.2" y="63" width="1.5" height="2.5" fill="#b08050"/><rect x="38.5" y="63" width="1.5" height="2.5" fill="#b08050"/><rect x="56.8" y="63" width="1.5" height="2.5" fill="#b08050"/><rect x="75.0" y="63" width="1.5" height="2.5" fill="#b08050"/><path d="M4 34 L7 33 L10 39 L12 42 L8 41 L7 44 L5 44 Z" fill="#3a7a50"/><rect x="5" y="36" width="2.5" height="7" fill="#b03030"/><rect x="4.5" y="43" width="3" height="1.5" fill="#2a4a8a"/></svg>
<div class="a" style="left:1163px;top:575px;width:34px;height:1.5px;background:#555"></div><div class="a" style="left:1175px;top:578px;width:10px;height:1px;background:#ccc"></div>
<div class="a" style="left:1260px;top:571px;font-size:10px;line-height:12px;color:#8f8f8f;letter-spacing:-0.1px;white-space:nowrap">Room Outline</div>
<svg class="a" style="left:1259px;top:582px" width="82" height="68" viewBox="0 0 82 68"><rect width="82" height="67" fill="#fff" stroke="#ccc" stroke-width="0.5"/><rect x="0" y="14.3" width="52" height="1.5" fill="#222"/><rect x="0" y="24.4" width="52" height="1.5" fill="#555"/><rect x="18" y="17" width="2" height="1.5" fill="#c04040"/><rect x="18" y="18.5" width="2" height="3" fill="#e0d0c0"/><rect x="18" y="21.5" width="2.5" height="2.5" fill="#a03030"/><g transform="translate(1 25) scale(1.1)"><path d="M2 3 H12 L14 5 H17 V7 H13 V8 H3 Z" fill="#b8b8b8" stroke="#555" stroke-width="0.5"/><path d="M3 8 V15 M5 8 V15 M10 8 V15 M12 8 V15" stroke="#666" stroke-width="1"/></g><path d="M23 33 L26 32 L29 38 L31 41 L27 40 L26 43 L24 43 Z" fill="#3a7a50"/><rect x="24" y="35" width="2.5" height="7" fill="#b03030"/><rect x="23.5" y="42" width="3" height="1.5" fill="#2a4a8a"/><rect x="37" y="38" width="2" height="1.5" fill="#c04040"/><rect x="37" y="39.5" width="2" height="3" fill="#e0d0c0"/><rect x="37" y="42.5" width="2.5" height="2.5" fill="#a03030"/><rect x="0" y="45" width="82" height="19" fill="#474747"/><g stroke="#7a7a7a" stroke-width="1"><path d="M10.2 45 V64"/><path d="M20.5 45 V64"/><path d="M30.8 45 V64"/><path d="M41.0 45 V64"/><path d="M51.2 45 V64"/><path d="M61.5 45 V64"/><path d="M71.8 45 V64"/><path d="M0 54.5 H82"/></g><rect x="0" y="64" width="82" height="1.2" fill="#c8a070"/><rect x="1.0" y="64" width="1.5" height="2.5" fill="#b08050"/><rect x="20.8" y="64" width="1.5" height="2.5" fill="#b08050"/><rect x="40.5" y="64" width="1.5" height="2.5" fill="#b08050"/><rect x="60.2" y="64" width="1.5" height="2.5" fill="#b08050"/><rect x="80.0" y="64" width="1.5" height="2.5" fill="#b08050"/></svg>
<div class="a" style="left:882px;top:702px;font-size:10px;line-height:12px;color:#8f8f8f;letter-spacing:-0.1px;white-space:nowrap">Office Wall - Current</div>
<div class="a" style="left:882px;top:714px;width:109px;height:99px;background:#f5f5f5;border-radius:2px"></div>
<div class="a" style="left:927px;top:720px;width:18px;height:1.5px;background:#555"></div><div class="a" style="left:931px;top:724px;width:10px;height:1px;background:#ccc"></div>
<svg class="a" style="left:895px;top:732px" width="83" height="67" viewBox="0 0 83 67"><rect x="0.5" y="0.5" width="82" height="66" fill="#fff" stroke="#8a8a8a" stroke-width="0.8"/><rect x="1" y="1" width="24" height="65" fill="#d6d6d6"/><circle cx="34" cy="5.2" r="1.6" fill="#ddd" stroke="#bbb" stroke-width="0.5"/><rect x="56" y="2.5" width="22" height="9.3" rx="3" fill="#dadada"/><rect x="80" y="4" width="1.5" height="61" fill="#d0d0d0"/><path d="M80 34 Q72 34 72 42 V47 Q72 50 66 50 Q58 50 58 56 V66 H80 Z" fill="#d9d9d9"/><rect x="25.8" y="18.3" width="52" height="1.6" fill="#333"/><rect x="29.3" y="15.7" width="7.8" height="50.5" fill="#1e1e1e"/><g fill="#777"><rect x="29.3" y="23.5" width="7.8" height="0.9"/><rect x="29.3" y="31.7" width="7.8" height="0.9"/><rect x="29.3" y="40" width="7.8" height="0.9"/><rect x="29.3" y="48.3" width="7.8" height="0.9"/><rect x="29.3" y="56.5" width="7.8" height="0.9"/></g><rect x="42.8" y="23.8" width="21" height="15.4" fill="#d9d9d9"/></svg>
<div class="a" style="left:1000px;top:702px;font-size:10px;line-height:12px;color:#8f8f8f;letter-spacing:-0.1px;white-space:nowrap">AC Wall</div>
<div class="a" style="left:1000px;top:714px;width:109px;height:99px;background:#f5f5f5;border-radius:2px"></div>
<div class="a" style="left:1045px;top:720px;width:18px;height:1.5px;background:#555"></div><div class="a" style="left:1049px;top:724px;width:10px;height:1px;background:#ccc"></div>
<svg class="a" style="left:1013px;top:732px" width="83" height="67" viewBox="0 0 83 67"><rect x="0.5" y="0.5" width="82" height="66" fill="#fff" stroke="#8a8a8a" stroke-width="0.8"/><rect x="1" y="1" width="24" height="65" fill="#d6d6d6"/><circle cx="34" cy="5.2" r="1.6" fill="#ddd" stroke="#bbb" stroke-width="0.5"/><rect x="56" y="2.5" width="22" height="9.3" rx="3" fill="#dadada"/><rect x="80" y="4" width="1.5" height="61" fill="#d0d0d0"/><path d="M80 34 Q72 34 72 42 V47 Q72 50 66 50 Q58 50 58 56 V66 H80 Z" fill="#d9d9d9"/><rect x="25.5" y="18.3" width="51.7" height="1.6" fill="#222"/><rect x="25.5" y="26.8" width="51.7" height="1.6" fill="#222"/><rect x="25.5" y="35.1" width="30" height="1.6" fill="#222"/><rect x="25.8" y="45.7" width="18.4" height="19.5" fill="#474747"/><g stroke="#7a7a7a" stroke-width="0.8"><path d="M25.8 55 H44.2 M35 55 V65.2"/></g><rect x="25.8" y="65.2" width="18.4" height="1.2" fill="#c8a070"/><path d="M30 38 L33 37.5 L32 41 L34 45 L31 45 Z" fill="#b03030"/></svg>
<div class="a" style="left:1144px;top:721px;font-size:10px;line-height:12px;color:#8f8f8f;letter-spacing:-0.1px;white-space:nowrap">Room Outline</div>
<svg class="a" style="left:1143px;top:732px" width="83" height="68" viewBox="0 0 83 68"><rect x="0.5" y="0.5" width="82" height="67" fill="#fff" stroke="#8a8a8a" stroke-width="0.8"/><rect x="1" y="1" width="24" height="66" fill="#d6d6d6"/><circle cx="33.4" cy="4.7" r="1.6" fill="#ddd" stroke="#bbb" stroke-width="0.5"/><rect x="55.7" y="2.5" width="21.3" height="8.6" rx="3" fill="#dadada"/><rect x="25.6" y="18.2" width="51.4" height="1.5" fill="#222"/><rect x="28" y="22.5" width="21.3" height="16.1" rx="1" fill="#dadada" stroke="#ccc" stroke-width="0.5"/><rect x="52.9" y="22.5" width="20.8" height="16.1" rx="1" fill="#dadada" stroke="#ccc" stroke-width="0.5"/><rect x="77.8" y="4" width="2.5" height="62" fill="#d0d0d0"/></svg>
<div class="a" style="left:1260px;top:684px;font-size:10px;line-height:12px;color:#8f8f8f;letter-spacing:-0.1px;white-space:nowrap">Room Outline</div>
<svg class="a" style="left:1259px;top:694px" width="82" height="68" viewBox="0 0 82 68"><rect x="0.5" y="0.5" width="81" height="67" fill="#fff" stroke="#bbb" stroke-width="1"/><g stroke="#c8c8c8" stroke-width="1" fill="none"><rect x="2" y="2" width="24.4" height="64"/><rect x="27.3" y="2" width="26.7" height="64"/><path d="M2 26.1 H26.4 M2 45 H26.4 M27.3 22 H54 M27.3 36.3 H54 M27.3 45 H54"/></g><path d="M5 12 L8 11 L11 17 L13 20 L9 19 L8 22 L6 22 Z" fill="#3a7a50"/><rect x="6" y="14" width="2.5" height="7" fill="#b03030"/><rect x="5.5" y="21" width="3" height="1.5" fill="#2a4a8a"/><g transform="translate(5 27) scale(1.0)"><path d="M2 3 H12 L14 5 H17 V7 H13 V8 H3 Z" fill="#b8b8b8" stroke="#555" stroke-width="0.5"/><path d="M3 8 V15 M5 8 V15 M10 8 V15 M12 8 V15" stroke="#666" stroke-width="1"/></g><path d="M30 30 L44 26 L53 29 L42 34 Z" fill="#ddd" stroke="#777" stroke-width="0.6"/><rect x="36" y="28" width="5" height="3" fill="#b03030"/><rect x="30" y="38" width="21" height="6" fill="#8a7050"/><rect x="60" y="9" width="2" height="1.5" fill="#c04040"/><rect x="60" y="10.5" width="2" height="3" fill="#e0d0c0"/><rect x="60" y="13.5" width="2.5" height="2.5" fill="#a03030"/><rect x="66" y="9" width="2" height="1.5" fill="#c04040"/><rect x="66" y="10.5" width="2" height="3" fill="#e0d0c0"/><rect x="66" y="13.5" width="2.5" height="2.5" fill="#a03030"/><rect x="72" y="9" width="2" height="1.5" fill="#c04040"/><rect x="72" y="10.5" width="2" height="3" fill="#e0d0c0"/><rect x="72" y="13.5" width="2.5" height="2.5" fill="#a03030"/><rect x="60" y="23" width="2" height="1.5" fill="#c04040"/><rect x="60" y="24.5" width="2" height="3" fill="#e0d0c0"/><rect x="60" y="27.5" width="2.5" height="2.5" fill="#a03030"/><rect x="66" y="23" width="2" height="1.5" fill="#c04040"/><rect x="66" y="24.5" width="2" height="3" fill="#e0d0c0"/><rect x="66" y="27.5" width="2.5" height="2.5" fill="#a03030"/><rect x="72" y="23" width="2" height="1.5" fill="#c04040"/><rect x="72" y="24.5" width="2" height="3" fill="#e0d0c0"/><rect x="72" y="27.5" width="2.5" height="2.5" fill="#a03030"/><rect x="57" y="17" width="24" height="1.6" fill="#111"/><rect x="57" y="31" width="24" height="1.6" fill="#111"/><path d="M62 42 Q70 38 79 42 L79 58 L62 58 Z" fill="#5a5a5a"/><path d="M59 56 H79 V60 H59 Z" fill="#666"/><path d="M61 60 L59 67 M77 60 L79 67" stroke="#c8a070" stroke-width="1"/></svg>
<div class="a" style="left:1272px;top:821px;width:2px;height:7px;background:#a04040"></div>
<div class="a" style="left:1309px;top:787px;width:28px;height:64px;background:#d8d8d8;border:1px solid #cfcfcf"></div>
<div class="a" style="left:1318px;top:850px;width:18px;height:22px;background:#fafafa;border:1px solid #ddd"></div>
<div class="a" style="left:1335px;top:145px;width:6px;height:645px;background:#a4a4a4;border-left:1px solid #8e8e8e;border-right:1px solid #8e8e8e;border-radius:0 0 3px 3px"></div>
<div class="a" style="left:411px;top:925px;width:658px;height:5px;background:rgba(120,120,120,0.55);border-radius:3px"></div>
<!--/CONTENT-->
<div class="a" style="left:256px;top:127px;width:1089px;height:17px;background:#fff;border-bottom:1px solid #e6e6e6"></div>
<div class="a" style="left:256px;top:127px;width:17px;height:808px;background:#fff;border-right:1px solid #e6e6e6"></div>
<div class="a" style="left:304.6px;top:128px;width:40px;text-align:center;font-size:9px;line-height:11px;color:#b3b3b3;letter-spacing:-0.1px">-700</div>
<div class="a" style="left:325px;top:141px;width:1px;height:3px;background:#c8c8c8"></div>
<div class="a" style="left:373.8px;top:128px;width:40px;text-align:center;font-size:9px;line-height:11px;color:#b3b3b3;letter-spacing:-0.1px">-600</div>
<div class="a" style="left:394px;top:141px;width:1px;height:3px;background:#c8c8c8"></div>
<div class="a" style="left:443.0px;top:128px;width:40px;text-align:center;font-size:9px;line-height:11px;color:#b3b3b3;letter-spacing:-0.1px">-500</div>
<div class="a" style="left:463px;top:141px;width:1px;height:3px;background:#c8c8c8"></div>
<div class="a" style="left:512.2px;top:128px;width:40px;text-align:center;font-size:9px;line-height:11px;color:#b3b3b3;letter-spacing:-0.1px">-400</div>
<div class="a" style="left:532px;top:141px;width:1px;height:3px;background:#c8c8c8"></div>
<div class="a" style="left:581.4px;top:128px;width:40px;text-align:center;font-size:9px;line-height:11px;color:#b3b3b3;letter-spacing:-0.1px">-300</div>
<div class="a" style="left:601px;top:141px;width:1px;height:3px;background:#c8c8c8"></div>
<div class="a" style="left:650.6px;top:128px;width:40px;text-align:center;font-size:9px;line-height:11px;color:#b3b3b3;letter-spacing:-0.1px">-200</div>
<div class="a" style="left:671px;top:141px;width:1px;height:3px;background:#c8c8c8"></div>
<div class="a" style="left:719.8px;top:128px;width:40px;text-align:center;font-size:9px;line-height:11px;color:#b3b3b3;letter-spacing:-0.1px">-100</div>
<div class="a" style="left:740px;top:141px;width:1px;height:3px;background:#c8c8c8"></div>
<div class="a" style="left:789.0px;top:128px;width:40px;text-align:center;font-size:9px;line-height:11px;color:#b3b3b3;letter-spacing:-0.1px">0</div>
<div class="a" style="left:809px;top:141px;width:1px;height:3px;background:#c8c8c8"></div>
<div class="a" style="left:858.2px;top:128px;width:40px;text-align:center;font-size:9px;line-height:11px;color:#b3b3b3;letter-spacing:-0.1px">100</div>
<div class="a" style="left:878px;top:141px;width:1px;height:3px;background:#c8c8c8"></div>
<div class="a" style="left:927.4px;top:128px;width:40px;text-align:center;font-size:9px;line-height:11px;color:#b3b3b3;letter-spacing:-0.1px">200</div>
<div class="a" style="left:947px;top:141px;width:1px;height:3px;background:#c8c8c8"></div>
<div class="a" style="left:996.6px;top:128px;width:40px;text-align:center;font-size:9px;line-height:11px;color:#b3b3b3;letter-spacing:-0.1px">300</div>
<div class="a" style="left:1017px;top:141px;width:1px;height:3px;background:#c8c8c8"></div>
<div class="a" style="left:1065.8px;top:128px;width:40px;text-align:center;font-size:9px;line-height:11px;color:#b3b3b3;letter-spacing:-0.1px">400</div>
<div class="a" style="left:1086px;top:141px;width:1px;height:3px;background:#c8c8c8"></div>
<div class="a" style="left:1135.0px;top:128px;width:40px;text-align:center;font-size:9px;line-height:11px;color:#b3b3b3;letter-spacing:-0.1px">500</div>
<div class="a" style="left:1155px;top:141px;width:1px;height:3px;background:#c8c8c8"></div>
<div class="a" style="left:1204.2px;top:128px;width:40px;text-align:center;font-size:9px;line-height:11px;color:#b3b3b3;letter-spacing:-0.1px">600</div>
<div class="a" style="left:1224px;top:141px;width:1px;height:3px;background:#c8c8c8"></div>
<div class="a" style="left:1273.4px;top:128px;width:40px;text-align:center;font-size:9px;line-height:11px;color:#b3b3b3;letter-spacing:-0.1px">700</div>
<div class="a" style="left:1293px;top:141px;width:1px;height:3px;background:#c8c8c8"></div>
<div class="a" style="left:242px;top:196.0px;width:40px;height:11px;text-align:center;font-size:9px;line-height:11px;color:#b3b3b3;transform:rotate(-90deg);letter-spacing:-0.1px">600</div>
<div class="a" style="left:269px;top:202px;width:3px;height:1px;background:#c8c8c8"></div>
<div class="a" style="left:242px;top:265.2px;width:40px;height:11px;text-align:center;font-size:9px;line-height:11px;color:#b3b3b3;transform:rotate(-90deg);letter-spacing:-0.1px">700</div>
<div class="a" style="left:269px;top:271px;width:3px;height:1px;background:#c8c8c8"></div>
<div class="a" style="left:242px;top:334.4px;width:40px;height:11px;text-align:center;font-size:9px;line-height:11px;color:#b3b3b3;transform:rotate(-90deg);letter-spacing:-0.1px">800</div>
<div class="a" style="left:269px;top:340px;width:3px;height:1px;background:#c8c8c8"></div>
<div class="a" style="left:242px;top:403.6px;width:40px;height:11px;text-align:center;font-size:9px;line-height:11px;color:#b3b3b3;transform:rotate(-90deg);letter-spacing:-0.1px">900</div>
<div class="a" style="left:269px;top:410px;width:3px;height:1px;background:#c8c8c8"></div>
<div class="a" style="left:242px;top:472.8px;width:40px;height:11px;text-align:center;font-size:9px;line-height:11px;color:#b3b3b3;transform:rotate(-90deg);letter-spacing:-0.1px">1000</div>
<div class="a" style="left:269px;top:479px;width:3px;height:1px;background:#c8c8c8"></div>
<div class="a" style="left:242px;top:542.0px;width:40px;height:11px;text-align:center;font-size:9px;line-height:11px;color:#b3b3b3;transform:rotate(-90deg);letter-spacing:-0.1px">1100</div>
<div class="a" style="left:269px;top:548px;width:3px;height:1px;background:#c8c8c8"></div>
<div class="a" style="left:242px;top:611.2px;width:40px;height:11px;text-align:center;font-size:9px;line-height:11px;color:#b3b3b3;transform:rotate(-90deg);letter-spacing:-0.1px">1200</div>
<div class="a" style="left:269px;top:617px;width:3px;height:1px;background:#c8c8c8"></div>
<div class="a" style="left:242px;top:680.4px;width:40px;height:11px;text-align:center;font-size:9px;line-height:11px;color:#b3b3b3;transform:rotate(-90deg);letter-spacing:-0.1px">1300</div>
<div class="a" style="left:269px;top:686px;width:3px;height:1px;background:#c8c8c8"></div>
<div class="a" style="left:242px;top:749.6px;width:40px;height:11px;text-align:center;font-size:9px;line-height:11px;color:#b3b3b3;transform:rotate(-90deg);letter-spacing:-0.1px">1400</div>
<div class="a" style="left:269px;top:756px;width:3px;height:1px;background:#c8c8c8"></div>
<div class="a" style="left:242px;top:818.8px;width:40px;height:11px;text-align:center;font-size:9px;line-height:11px;color:#b3b3b3;transform:rotate(-90deg);letter-spacing:-0.1px">1500</div>
<div class="a" style="left:269px;top:825px;width:3px;height:1px;background:#c8c8c8"></div>
<div class="a" style="left:242px;top:888.0px;width:40px;height:11px;text-align:center;font-size:9px;line-height:11px;color:#b3b3b3;transform:rotate(-90deg);letter-spacing:-0.1px">1600</div>
<div class="a" style="left:269px;top:894px;width:3px;height:1px;background:#c8c8c8"></div>
<!--/RULERS-->
  <!-- RIGHT PANEL -->
  <div id="rp" class="a"></div>
  <div class="a t" style="left:1358px;top:138px;color:#1e1e1e;font-weight:bold;font-size:10px;letter-spacing:-0.2px">Design</div>
  <div class="a t" style="left:1402px;top:138px;color:#8a8a8a;font-size:10px;letter-spacing:-0.1px">Prototype</div>
  <div class="a hr" style="left:1346px;top:160px;width:198px"></div>
  <div class="a t" style="left:1358px;top:176px;color:#1e1e1e;font-weight:bold;font-size:10px;letter-spacing:-0.2px">Page</div>
  <div class="a" style="left:1358px;top:201px;width:13px;height:13px;background:#f5f5f5;border:1px solid #e6e6e6;border-radius:2px"></div>
  <div class="a t" style="left:1378px;top:202px;color:#1e1e1e">F5F5F5</div>
  <div class="a t" style="left:1439px;top:202px;color:#1e1e1e">100%</div>
  <svg class="a" style="left:1517px;top:203px" width="13" height="9" viewBox="0 0 13 9"><path d="M0.8 4.5 Q6.5 -2 12.2 4.5 Q6.5 11 0.8 4.5 Z" fill="none" stroke="#1e1e1e" stroke-width="1.1"/><circle cx="6.5" cy="4.5" r="1.8" fill="#1e1e1e"/></svg>
  <div class="a hr" style="left:1346px;top:227px;width:198px"></div>
  <div class="a t" style="left:1358px;top:242px;color:#8a8a8a;font-weight:bold;font-size:10px;letter-spacing:-0.3px">Local variables</div>
  <svg class="a" style="left:1518px;top:240px" width="11" height="15" viewBox="0 0 11 15"><path d="M3 0.5 V8 M3 12 V14.5 M8 0.5 V3 M8 7 V14.5" stroke="#555" stroke-width="1"/><circle cx="3" cy="10" r="1.8" fill="none" stroke="#555"/><circle cx="8" cy="5" r="1.8" fill="none" stroke="#555"/></svg>
  <div class="a hr" style="left:1346px;top:268px;width:198px"></div>
  <div class="a t" style="left:1358px;top:283px;color:#8a8a8a;font-weight:bold;font-size:10px;letter-spacing:-0.3px">Local styles</div>
  <svg class="a" style="left:1518px;top:283px" width="11" height="11" viewBox="0 0 11 11"><path d="M5.5 0.5 V10.5 M0.5 5.5 H10.5" stroke="#666" stroke-width="1"/></svg>
  <div class="a hr" style="left:1346px;top:308px;width:198px"></div>
  <div class="a t" style="left:1358px;top:323px;color:#8a8a8a;font-weight:bold;font-size:10px;letter-spacing:-0.3px">Export</div>
  <svg class="a" style="left:1518px;top:323px" width="11" height="11" viewBox="0 0 11 11"><path d="M5.5 0.5 V10.5 M0.5 5.5 H10.5" stroke="#666" stroke-width="1"/></svg>
  <div class="a hr" style="left:1346px;top:349px;width:198px"></div>
  <div class="a" style="left:1504px;top:895px;width:26px;height:26px;border-radius:50%;background:#1e1e1e"></div><svg class="a" style="left:1512px;top:901px" width="10" height="14" viewBox="0 0 10 14"><path d="M2.2 4 A2.8 2.8 0 1 1 6.5 6.2 Q5 7.2 5 9" fill="none" stroke="#e6e6e6" stroke-width="1"/><circle cx="5" cy="11.3" r="0.6" fill="#e6e6e6"/></svg>

</div>
</body></html>
